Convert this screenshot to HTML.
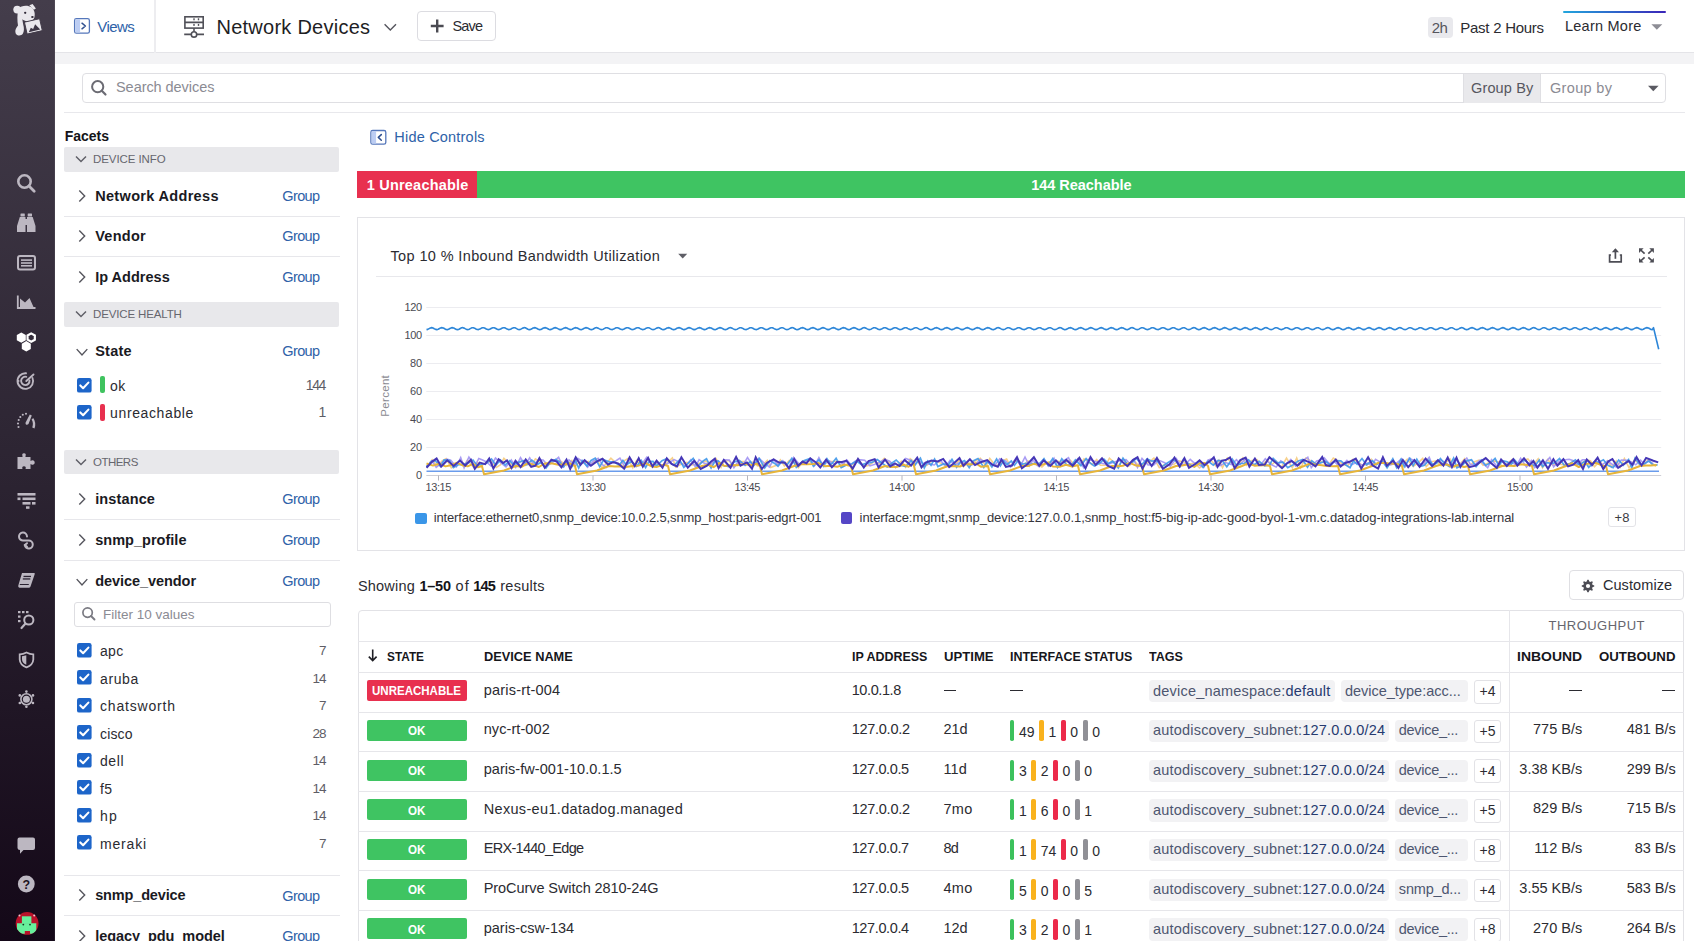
<!DOCTYPE html>
<html><head><meta charset="utf-8"><title>Network Devices</title><style>
html,body{margin:0;padding:0;width:1694px;height:941px;overflow:hidden;background:#fff;}
body{position:relative;font-family:"Liberation Sans",sans-serif;}
.t{position:absolute;white-space:nowrap;line-height:1;}
.r{position:absolute;box-sizing:border-box;}
svg{position:absolute;overflow:visible;}
</style></head><body>
<div class="r" style="left:0.00px;top:0.00px;width:55.00px;height:941.00px;background:linear-gradient(180deg,#443d4b 0%,#2c2432 50%,#140818 100%);"></div>
<div class="r" style="left:54.00px;top:0.00px;width:1.00px;height:941.00px;background:rgba(255,255,255,0.06);"></div>
<svg width="55" height="941" viewBox="0 0 55 941" style="left:0;top:0"><g fill="#e9e7ec"><circle cx="17.2" cy="9.6" r="3.9"/><path d="M29.3 5.2 L32.6 3.9 L35.9 8.6 L33.8 9.8 Z"/><path d="M18.5 8.5 C21 5.3 28 4.8 31.5 7.3 C34.6 9.8 35.3 14 34.4 17.4 C33.7 20.2 30.2 21.6 27.2 21.2 C25.2 21 23.5 20.3 22.3 19.3 L23.2 24.5 C24.2 27.8 24.3 31.2 22.8 33.8 C21.3 36.2 16.8 36.2 15.6 33.2 C14.6 30.4 16.3 27.8 18 25.6 C17.2 21 17 14 18.5 8.5 Z"/></g><circle cx="25.2" cy="12.8" r="1.15" fill="#2e2836"/><ellipse cx="32.4" cy="17" rx="1.3" ry="1.1" fill="#2e2836"/><g transform="rotate(-13 33.5 26.5)"><rect x="25.6" y="20.3" width="15.6" height="12.2" fill="#e9e7ec" stroke="#433c4a" stroke-width="1"/><path d="M27.6 31 L30.6 27.2 L32.6 28.8 L35.6 24.6 L39.4 31 Z" fill="#3d3645"/></g><circle cx="24.5" cy="181.5" r="6.2" fill="none" stroke="#bcb7c1" stroke-width="2.6"/><path d="M29 186 L34.2 191.2" stroke="#bcb7c1" stroke-width="2.8" stroke-linecap="round"/><g fill="#bcb7c1"><rect x="20.5" y="213.5" width="4.3" height="3" rx="0.5"/><rect x="27.7" y="213.5" width="4.3" height="3" rx="0.5"/><path d="M19.8 217 L25.5 217 L25.5 232 L17 232 L17 226 Z"/><path d="M27 217 L32.7 217 L35.5 226 L35.5 232 L27 232 Z"/><rect x="24.5" y="219" width="3.5" height="6"/></g><rect x="18" y="256" width="17" height="13.5" rx="2" fill="none" stroke="#bcb7c1" stroke-width="2"/><g fill="#bcb7c1"><rect x="21" y="259.3" width="11" height="1.6"/><rect x="21" y="262.2" width="11" height="1.6"/><rect x="21" y="265" width="11" height="1.6"/></g><path d="M17.8 295.5 L17.8 308 L35.5 308" fill="none" stroke="#bcb7c1" stroke-width="1.8"/><path d="M20 307 L20 298.5 L25 302.5 L29.5 298 L33.5 307 Z" fill="#bcb7c1"/><path d="M25.80,340.20 L21.30,342.80 L16.80,340.20 L16.80,335.00 L21.30,332.40 L25.80,335.00Z" fill="#ffffff"/><path d="M34.84,339.70 L31.20,341.80 L27.56,339.70 L27.56,335.50 L31.20,333.40 L34.84,335.50Z" fill="none" stroke="#ffffff" stroke-width="2.2"/><path d="M30.80,348.90 L26.30,351.50 L21.80,348.90 L21.80,343.70 L26.30,341.10 L30.80,343.70Z" fill="#ffffff"/><g fill="none" stroke="#bcb7c1" stroke-width="1.9" stroke-linecap="round"><path d="M32.5 378 A7.8 7.8 0 1 1 26 373.3"/><path d="M29.5 380.5 A4.2 4.2 0 1 1 26.3 376.8"/><path d="M26.3 381 L33.5 374.5"/></g><circle cx="18.5" cy="381" r="1" fill="#bcb7c1"/><g fill="#bcb7c1"><path d="M29.8 414.5 L31.8 415.5 L28.5 424 Q27 425.5 25.8 424.3 Q25 423 26 421.8 Z"/><path d="M33.2 418 Q36.5 422.5 34.5 428.5 L32.3 427.5 Q33.8 423 31.6 419.5 Z"/><circle cx="18.5" cy="427.0" r="1.05"/><circle cx="18.0" cy="423.5" r="1.05"/><circle cx="18.7" cy="420.0" r="1.05"/><circle cx="20.3" cy="417.0" r="1.05"/><circle cx="22.8" cy="414.8" r="1.05"/><circle cx="26.0" cy="413.8" r="1.05"/></g><path d="M17.5 457 L22.5 457 L22.5 456 Q21.5 453.5 24 453.2 Q26.5 453.5 25.5 456 L25.5 457 L30.5 457 L30.5 461 Q33 459.5 34.5 461.5 Q35.5 463.5 33.5 464.5 Q32 465.2 30.5 464 L30.5 469 L25.5 469 Q26.5 466.5 24 466.2 Q21.5 466.5 22.5 469 L17.5 469 Z" fill="#bcb7c1"/><g fill="#bcb7c1"><rect x="17.5" y="493" width="18" height="2.6"/><rect x="17.5" y="497.5" width="3" height="2.6"/><rect x="22.5" y="497.5" width="13" height="2.6"/><rect x="22.5" y="502" width="8" height="2.6"/><rect x="32" y="502" width="3.5" height="2.6"/><rect x="26" y="506.3" width="3.5" height="2.5"/></g><g fill="none" stroke="#bcb7c1" stroke-width="2" stroke-linecap="round"><path d="M27 536.5 A4 4 0 1 0 23.5 540.5 L28.5 540.5 A4 4 0 1 1 24.8 545"/><path d="M24.8 545 L27 543.2 M24.8 545 L27 546.8"/></g><path d="M22 573 L34.5 573 Q35 573.5 34.6 574.5 L30.5 586.5 Q30 587.8 28.8 587.8 L19.5 587.8 Q17.8 587.5 18.3 585.5 Z" fill="#bcb7c1"/><g fill="#2a2231"><rect x="23.5" y="575.8" width="7.5" height="1.3"/><rect x="22.8" y="578.3" width="7.5" height="1.3"/><rect x="19.8" y="584" width="9" height="1"/></g><g fill="#bcb7c1"><rect x="18" y="611" width="2.5" height="2.2"/><rect x="22" y="611" width="2.5" height="2.2"/><rect x="26" y="611" width="2.5" height="2.2"/><rect x="18" y="615.5" width="2.5" height="2.2"/><rect x="18" y="620" width="2.5" height="2.2"/></g><circle cx="28.8" cy="620" r="4.6" fill="none" stroke="#bcb7c1" stroke-width="2"/><path d="M25.5 623.5 L21.5 628" stroke="#bcb7c1" stroke-width="2.2" stroke-linecap="round"/><path d="M26.5 652.5 Q30 654.3 33.3 654.3 L33.3 659.5 Q33 665 26.5 667.3 Q20 665 19.7 659.5 L19.7 654.3 Q23 654.3 26.5 652.5 Z" fill="none" stroke="#bcb7c1" stroke-width="1.8"/><path d="M26.3 655.3 L26.3 664.8 Q22 663 22 659.3 L22 656.2 Q24.5 656 26.3 655.3Z" fill="#bcb7c1"/><circle cx="26.4" cy="699.2" r="5.5" fill="none" stroke="#bcb7c1" stroke-width="1.6"/><circle cx="26.4" cy="699.2" r="3.5" fill="#bcb7c1"/><circle cx="26.40" cy="691.60" r="1.3" fill="#bcb7c1"/><circle cx="32.98" cy="695.40" r="1.3" fill="#bcb7c1"/><circle cx="32.98" cy="703.00" r="1.3" fill="#bcb7c1"/><circle cx="26.40" cy="706.80" r="1.3" fill="#bcb7c1"/><circle cx="19.82" cy="703.00" r="1.3" fill="#bcb7c1"/><circle cx="19.82" cy="695.40" r="1.3" fill="#bcb7c1"/><path d="M19.5 837.5 L33 837.5 Q35 837.5 35 839.5 L35 848 Q35 850 33 850 L23.5 850 L20 853.8 L20 850 Q17.5 850 17.5 848 L17.5 839.5 Q17.5 837.5 19.5 837.5Z" fill="#bcb7c1"/><circle cx="26.3" cy="884" r="8.4" fill="#bcb7c1"/><text x="26.3" y="888.6" text-anchor="middle" font-family="Liberation Sans" font-weight="bold" font-size="12.5" fill="#1c1322">?</text><defs><clipPath id="avc"><circle cx="27.1" cy="923.4" r="11.4"/></clipPath></defs><circle cx="27.1" cy="923.4" r="11.4" fill="#b8122a"/><g clip-path="url(#avc)" fill="#66f09c"><rect x="21.9" y="916.3" width="9.5" height="7.5"/><path d="M17 923.3 L36.3 923.3 L36.3 933.8 L30 933.8 L30 931 L24.8 931 L24.8 933.8 L17 933.8 Z"/></g><circle cx="23.3" cy="924.6" r="0.9" fill="#0f3a1c"/><circle cx="30" cy="924.6" r="0.9" fill="#0f3a1c"/><circle cx="19.5" cy="915.6" r="1" fill="#f0c8d0"/><circle cx="34.2" cy="915.6" r="1" fill="#f0c8d0"/></svg>
<div class="r" style="left:55.00px;top:0.00px;width:1639.00px;height:53.00px;background:#ffffff;"></div>
<div class="r" style="left:55.00px;top:52.00px;width:1639.00px;height:1.00px;background:#e4e4e8;"></div>
<div class="r" style="left:55.00px;top:53.00px;width:1639.00px;height:11.00px;background:#f3f3f5;"></div>
<div class="r" style="left:154.00px;top:0.00px;width:2.00px;height:53.00px;background:#ededf0;"></div>
<svg width="30" height="30" style="left:68px;top:12px" viewBox="68 12 30 30"><rect x="74.6" y="18.6" width="14.8" height="14.6" rx="1.8" fill="#fff" stroke="#5577bb" stroke-width="1.3"/><rect x="75.3" y="19.3" width="4.8" height="13.2" fill="#bccdf3"/><path d="M82 23.2 L85.4 26 L82 28.8" fill="none" stroke="#2f4f8e" stroke-width="1.5" stroke-linecap="round" stroke-linejoin="round"/></svg>
<div class="t" style="left:97.20px;top:18.60px;font-size:15.00px;letter-spacing:-0.537px;color:#2e62a8;">Views</div>
<svg width="30" height="30" style="left:176px;top:10px" viewBox="176 10 30 30"><g fill="none" stroke="#505058" stroke-width="1.6"><rect x="184.9" y="16.8" width="18.3" height="11.3"/><path d="M184.9 22.4 L203.2 22.4 M194 28.1 L194 31.6 M184.2 34.4 L191.2 34.4 M196.9 34.4 L204 34.4"/><circle cx="194" cy="34.4" r="2.7"/></g><g fill="#505058"><rect x="193.3" y="18.3" width="1.4" height="2"/><rect x="197.8" y="18.3" width="1.4" height="2"/><rect x="193.3" y="23.9" width="1.4" height="2"/><rect x="197.8" y="23.9" width="1.4" height="2"/></g></svg>
<div class="t" style="left:216.50px;top:17.27px;font-size:20.00px;letter-spacing:0.250px;color:#1e1e24;">Network Devices</div>
<svg width="16" height="12" style="left:382px;top:21px" viewBox="382 21 16 12"><path d="M384.6 24.3 L390.3 30 L396 24.3" fill="none" stroke="#55555d" stroke-width="1.4"/></svg>
<div class="r" style="left:417.40px;top:11.30px;width:78.40px;height:29.90px;background:#fff;border:1px solid #dcdce1;border-radius:4px;"></div>
<svg width="16" height="16" style="left:429px;top:18px" viewBox="429 18 16 16"><path d="M437.2 19.6 L437.2 32.4 M430.8 26 L443.6 26" stroke="#4a4a52" stroke-width="2.4"/></svg>
<div class="t" style="left:452.40px;top:18.93px;font-size:14.50px;letter-spacing:-0.820px;color:#2b2b31;">Save</div>
<div class="r" style="left:1427.60px;top:16.80px;width:25.10px;height:21.40px;background:#e9e9ed;border-radius:4px;"></div>
<div class="t" style="left:1431.80px;top:20.00px;font-size:15.00px;letter-spacing:-0.750px;color:#55555d;">2h</div>
<div class="t" style="left:1460.30px;top:20.00px;font-size:15.00px;letter-spacing:-0.264px;color:#2b2b31;">Past 2 Hours</div>
<div class="r" style="left:1563.40px;top:11.00px;width:102.80px;height:2.40px;background:linear-gradient(90deg,#22a6dd,#3a25b8);border-radius:1px;"></div>
<div class="t" style="left:1565.00px;top:18.73px;font-size:14.50px;letter-spacing:0.237px;color:#2b2b31;">Learn More</div>
<svg width="14" height="10" style="left:1650px;top:22px" viewBox="1650 22 14 10"><path d="M1651.4 24.3 L1662.3 24.3 L1656.85 29.8 Z" fill="#8d8d95"/></svg>
<div class="r" style="left:82.40px;top:73.00px;width:1584.00px;height:30.40px;background:#fff;border:1px solid #dfdfe3;border-radius:4px;"></div>
<div class="r" style="left:1462.80px;top:73.50px;width:78.20px;height:29.40px;background:#e9e9ec;border-left:1px solid #dfdfe3;border-right:1px solid #dfdfe3;"></div>
<svg width="20" height="20" style="left:89px;top:78px" viewBox="89 78 20 20"><circle cx="97.7" cy="86.7" r="5.6" fill="none" stroke="#6b6b73" stroke-width="2"/><path d="M101.8 90.8 L105.5 94.5" stroke="#6b6b73" stroke-width="2.2" stroke-linecap="round"/></svg>
<div class="t" style="left:116.00px;top:80.23px;font-size:14.50px;letter-spacing:-0.054px;color:#8b8b93;">Search devices</div>
<div class="t" style="left:1471.00px;top:80.73px;font-size:14.50px;letter-spacing:0.148px;color:#57575f;">Group By</div>
<div class="t" style="left:1550.00px;top:80.73px;font-size:14.50px;letter-spacing:0.333px;color:#8b8b93;">Group by</div>
<svg width="14" height="10" style="left:1646px;top:83px" viewBox="1646 83 14 10"><path d="M1648 85.7 L1658.6 85.7 L1653.3 91.2 Z" fill="#5a5a62"/></svg>
<div class="r" style="left:64.00px;top:112.00px;width:1620.60px;height:1.00px;background:#e8e8ec;"></div>
<div class="t" style="left:64.70px;top:128.85px;font-size:14.00px;letter-spacing:-0.016px;font-weight:bold;color:#141418;">Facets</div>
<div class="r" style="left:64.30px;top:146.50px;width:274.90px;height:25.00px;background:#e8e8eb;border-radius:2px;"></div>
<svg width="16" height="12" style="left:72.8px;top:152.8px" viewBox="0 0 16 12"><path d="M3.00 3.40 L8 8.60 L13.00 3.40" fill="none" stroke="#5f5f67" stroke-width="1.40"/></svg>
<div class="t" style="left:93.00px;top:153.97px;font-size:11.50px;letter-spacing:-0.078px;color:#66666e;">DEVICE INFO</div>
<svg width="12" height="14" style="left:76.1px;top:188.5px" viewBox="0 0 12 14"><path d="M3.3 1.4 L8.7 7 L3.3 12.6" fill="none" stroke="#55555d" stroke-width="1.4"/></svg>
<div class="t" style="left:95.20px;top:188.53px;font-size:14.50px;letter-spacing:0.325px;font-weight:bold;color:#1a1a1f;">Network Address</div>
<div class="t" style="left:282.20px;top:188.83px;font-size:14.50px;letter-spacing:-0.578px;color:#2e62a8;">Group</div>
<div class="r" style="left:64.30px;top:215.80px;width:275.70px;height:1.00px;background:#e7e7eb;"></div>
<svg width="12" height="14" style="left:76.1px;top:228.7px" viewBox="0 0 12 14"><path d="M3.3 1.4 L8.7 7 L3.3 12.6" fill="none" stroke="#55555d" stroke-width="1.4"/></svg>
<div class="t" style="left:95.20px;top:228.73px;font-size:14.50px;letter-spacing:0.269px;font-weight:bold;color:#1a1a1f;">Vendor</div>
<div class="t" style="left:282.20px;top:229.03px;font-size:14.50px;letter-spacing:-0.578px;color:#2e62a8;">Group</div>
<div class="r" style="left:64.30px;top:256.10px;width:275.70px;height:1.00px;background:#e7e7eb;"></div>
<svg width="12" height="14" style="left:76.1px;top:269.8px" viewBox="0 0 12 14"><path d="M3.3 1.4 L8.7 7 L3.3 12.6" fill="none" stroke="#55555d" stroke-width="1.4"/></svg>
<div class="t" style="left:95.20px;top:269.83px;font-size:14.50px;letter-spacing:0.013px;font-weight:bold;color:#1a1a1f;">Ip Address</div>
<div class="t" style="left:282.20px;top:270.13px;font-size:14.50px;letter-spacing:-0.578px;color:#2e62a8;">Group</div>
<div class="r" style="left:64.30px;top:302.00px;width:274.90px;height:24.50px;background:#e8e8eb;border-radius:2px;"></div>
<svg width="16" height="12" style="left:72.8px;top:308.3px" viewBox="0 0 16 12"><path d="M3.00 3.40 L8 8.60 L13.00 3.40" fill="none" stroke="#5f5f67" stroke-width="1.40"/></svg>
<div class="t" style="left:93.00px;top:309.47px;font-size:11.50px;letter-spacing:-0.134px;color:#66666e;">DEVICE HEALTH</div>
<svg width="16" height="12" style="left:74.1px;top:345.8px" viewBox="0 0 16 12"><path d="M2.70 3.10 L8 8.90 L13.30 3.10" fill="none" stroke="#55555d" stroke-width="1.40"/></svg>
<div class="t" style="left:95.20px;top:344.03px;font-size:14.50px;letter-spacing:0.237px;font-weight:bold;color:#1a1a1f;">State</div>
<div class="t" style="left:282.20px;top:344.33px;font-size:14.50px;letter-spacing:-0.578px;color:#2e62a8;">Group</div>
<svg width="15" height="15" style="left:77.3px;top:377.6px" viewBox="0 0 15 15"><rect x="0" y="0" width="14.6" height="14.6" rx="2.2" fill="#1d65c9"/><path d="M3.3 7.4 L6.1 10.2 L11.4 4.6" fill="none" stroke="#fff" stroke-width="2.1" stroke-linecap="round" stroke-linejoin="round"/></svg>
<div class="r" style="left:99.90px;top:376.20px;width:4.90px;height:17.10px;background:#3fc35f;border-radius:2px;"></div>
<div class="t" style="left:110.10px;top:378.55px;font-size:14.00px;letter-spacing:0.360px;color:#2b2b31;">ok</div>
<div class="t" style="left:305.80px;top:378.15px;font-size:14.00px;letter-spacing:-1.390px;color:#5e5e66;">144</div>
<svg width="15" height="15" style="left:77.3px;top:404.9px" viewBox="0 0 15 15"><rect x="0" y="0" width="14.6" height="14.6" rx="2.2" fill="#1d65c9"/><path d="M3.3 7.4 L6.1 10.2 L11.4 4.6" fill="none" stroke="#fff" stroke-width="2.1" stroke-linecap="round" stroke-linejoin="round"/></svg>
<div class="r" style="left:99.90px;top:403.50px;width:4.90px;height:17.10px;background:#e8304f;border-radius:2px;"></div>
<div class="t" style="left:110.10px;top:405.65px;font-size:14.00px;letter-spacing:0.613px;color:#2b2b31;">unreachable</div>
<div class="t" style="left:318.43px;top:405.45px;font-size:14.00px;color:#5e5e66;">1</div>
<div class="r" style="left:64.30px;top:450.00px;width:274.90px;height:24.30px;background:#e8e8eb;border-radius:2px;"></div>
<svg width="16" height="12" style="left:72.8px;top:456.3px" viewBox="0 0 16 12"><path d="M3.00 3.40 L8 8.60 L13.00 3.40" fill="none" stroke="#5f5f67" stroke-width="1.40"/></svg>
<div class="t" style="left:93.00px;top:457.47px;font-size:11.50px;letter-spacing:-0.520px;color:#66666e;">OTHERS</div>
<svg width="12" height="14" style="left:76.1px;top:491.9px" viewBox="0 0 12 14"><path d="M3.3 1.4 L8.7 7 L3.3 12.6" fill="none" stroke="#55555d" stroke-width="1.4"/></svg>
<div class="t" style="left:95.20px;top:491.93px;font-size:14.50px;letter-spacing:0.129px;font-weight:bold;color:#1a1a1f;">instance</div>
<div class="t" style="left:282.20px;top:492.23px;font-size:14.50px;letter-spacing:-0.578px;color:#2e62a8;">Group</div>
<div class="r" style="left:64.30px;top:518.80px;width:275.70px;height:1.00px;background:#e7e7eb;"></div>
<svg width="12" height="14" style="left:76.1px;top:532.5px" viewBox="0 0 12 14"><path d="M3.3 1.4 L8.7 7 L3.3 12.6" fill="none" stroke="#55555d" stroke-width="1.4"/></svg>
<div class="t" style="left:95.20px;top:532.53px;font-size:14.50px;letter-spacing:0.022px;font-weight:bold;color:#1a1a1f;">snmp_profile</div>
<div class="t" style="left:282.20px;top:532.83px;font-size:14.50px;letter-spacing:-0.578px;color:#2e62a8;">Group</div>
<div class="r" style="left:64.30px;top:559.50px;width:275.70px;height:1.00px;background:#e7e7eb;"></div>
<svg width="16" height="12" style="left:74.1px;top:575.7px" viewBox="0 0 16 12"><path d="M2.70 3.10 L8 8.90 L13.30 3.10" fill="none" stroke="#55555d" stroke-width="1.40"/></svg>
<div class="t" style="left:95.20px;top:573.93px;font-size:14.50px;letter-spacing:-0.056px;font-weight:bold;color:#1a1a1f;">device_vendor</div>
<div class="t" style="left:282.20px;top:574.23px;font-size:14.50px;letter-spacing:-0.578px;color:#2e62a8;">Group</div>
<div class="r" style="left:73.90px;top:601.70px;width:256.70px;height:25.60px;background:#fff;border:1px solid #dedee2;border-radius:3px;"></div>
<svg width="16" height="16" style="left:81px;top:606px" viewBox="81 606 16 16"><circle cx="87.6" cy="612.6" r="4.7" fill="none" stroke="#7a7a82" stroke-width="1.7"/><path d="M91 616 L94.5 619.5" stroke="#7a7a82" stroke-width="1.9" stroke-linecap="round"/></svg>
<div class="t" style="left:103.00px;top:607.87px;font-size:13.50px;letter-spacing:-0.009px;color:#8b8b93;">Filter 10 values</div>
<svg width="15" height="15" style="left:77.2px;top:642.8px" viewBox="0 0 15 15"><rect x="0" y="0" width="14.6" height="14.6" rx="2.2" fill="#1d65c9"/><path d="M3.3 7.4 L6.1 10.2 L11.4 4.6" fill="none" stroke="#fff" stroke-width="2.1" stroke-linecap="round" stroke-linejoin="round"/></svg>
<div class="t" style="left:100.00px;top:644.15px;font-size:14.00px;letter-spacing:0.330px;color:#2b2b31;">apc</div>
<div class="t" style="left:318.91px;top:644.27px;font-size:13.50px;color:#5e5e66;">7</div>
<svg width="15" height="15" style="left:77.2px;top:670.3px" viewBox="0 0 15 15"><rect x="0" y="0" width="14.6" height="14.6" rx="2.2" fill="#1d65c9"/><path d="M3.3 7.4 L6.1 10.2 L11.4 4.6" fill="none" stroke="#fff" stroke-width="2.1" stroke-linecap="round" stroke-linejoin="round"/></svg>
<div class="t" style="left:100.00px;top:671.65px;font-size:14.00px;letter-spacing:0.590px;color:#2b2b31;">aruba</div>
<div class="t" style="left:312.40px;top:671.77px;font-size:13.50px;letter-spacing:-0.985px;color:#5e5e66;">14</div>
<svg width="15" height="15" style="left:77.2px;top:697.8px" viewBox="0 0 15 15"><rect x="0" y="0" width="14.6" height="14.6" rx="2.2" fill="#1d65c9"/><path d="M3.3 7.4 L6.1 10.2 L11.4 4.6" fill="none" stroke="#fff" stroke-width="2.1" stroke-linecap="round" stroke-linejoin="round"/></svg>
<div class="t" style="left:100.00px;top:699.15px;font-size:14.00px;letter-spacing:0.812px;color:#2b2b31;">chatsworth</div>
<div class="t" style="left:318.91px;top:699.27px;font-size:13.50px;color:#5e5e66;">7</div>
<svg width="15" height="15" style="left:77.2px;top:725.3px" viewBox="0 0 15 15"><rect x="0" y="0" width="14.6" height="14.6" rx="2.2" fill="#1d65c9"/><path d="M3.3 7.4 L6.1 10.2 L11.4 4.6" fill="none" stroke="#fff" stroke-width="2.1" stroke-linecap="round" stroke-linejoin="round"/></svg>
<div class="t" style="left:100.00px;top:726.65px;font-size:14.00px;letter-spacing:0.145px;color:#2b2b31;">cisco</div>
<div class="t" style="left:312.40px;top:726.77px;font-size:13.50px;letter-spacing:-0.985px;color:#5e5e66;">28</div>
<svg width="15" height="15" style="left:77.2px;top:752.8px" viewBox="0 0 15 15"><rect x="0" y="0" width="14.6" height="14.6" rx="2.2" fill="#1d65c9"/><path d="M3.3 7.4 L6.1 10.2 L11.4 4.6" fill="none" stroke="#fff" stroke-width="2.1" stroke-linecap="round" stroke-linejoin="round"/></svg>
<div class="t" style="left:100.00px;top:754.15px;font-size:14.00px;letter-spacing:0.577px;color:#2b2b31;">dell</div>
<div class="t" style="left:312.40px;top:754.27px;font-size:13.50px;letter-spacing:-0.985px;color:#5e5e66;">14</div>
<svg width="15" height="15" style="left:77.2px;top:780.3px" viewBox="0 0 15 15"><rect x="0" y="0" width="14.6" height="14.6" rx="2.2" fill="#1d65c9"/><path d="M3.3 7.4 L6.1 10.2 L11.4 4.6" fill="none" stroke="#fff" stroke-width="2.1" stroke-linecap="round" stroke-linejoin="round"/></svg>
<div class="t" style="left:100.00px;top:781.65px;font-size:14.00px;letter-spacing:0.310px;color:#2b2b31;">f5</div>
<div class="t" style="left:312.40px;top:781.77px;font-size:13.50px;letter-spacing:-0.985px;color:#5e5e66;">14</div>
<svg width="15" height="15" style="left:77.2px;top:807.8px" viewBox="0 0 15 15"><rect x="0" y="0" width="14.6" height="14.6" rx="2.2" fill="#1d65c9"/><path d="M3.3 7.4 L6.1 10.2 L11.4 4.6" fill="none" stroke="#fff" stroke-width="2.1" stroke-linecap="round" stroke-linejoin="round"/></svg>
<div class="t" style="left:100.00px;top:809.15px;font-size:14.00px;letter-spacing:1.260px;color:#2b2b31;">hp</div>
<div class="t" style="left:312.40px;top:809.27px;font-size:13.50px;letter-spacing:-0.985px;color:#5e5e66;">14</div>
<svg width="15" height="15" style="left:77.2px;top:835.3px" viewBox="0 0 15 15"><rect x="0" y="0" width="14.6" height="14.6" rx="2.2" fill="#1d65c9"/><path d="M3.3 7.4 L6.1 10.2 L11.4 4.6" fill="none" stroke="#fff" stroke-width="2.1" stroke-linecap="round" stroke-linejoin="round"/></svg>
<div class="t" style="left:100.00px;top:836.65px;font-size:14.00px;letter-spacing:0.820px;color:#2b2b31;">meraki</div>
<div class="t" style="left:318.91px;top:836.77px;font-size:13.50px;color:#5e5e66;">7</div>
<div class="r" style="left:64.30px;top:874.80px;width:275.70px;height:1.00px;background:#e7e7eb;"></div>
<svg width="12" height="14" style="left:76.1px;top:888.3px" viewBox="0 0 12 14"><path d="M3.3 1.4 L8.7 7 L3.3 12.6" fill="none" stroke="#55555d" stroke-width="1.4"/></svg>
<div class="t" style="left:95.20px;top:888.33px;font-size:14.50px;letter-spacing:-0.156px;font-weight:bold;color:#1a1a1f;">snmp_device</div>
<div class="t" style="left:282.20px;top:888.63px;font-size:14.50px;letter-spacing:-0.578px;color:#2e62a8;">Group</div>
<div class="r" style="left:64.30px;top:915.30px;width:275.70px;height:1.00px;background:#e7e7eb;"></div>
<svg width="12" height="14" style="left:76.1px;top:928.9px" viewBox="0 0 12 14"><path d="M3.3 1.4 L8.7 7 L3.3 12.6" fill="none" stroke="#55555d" stroke-width="1.4"/></svg>
<div class="t" style="left:95.20px;top:928.93px;font-size:14.50px;letter-spacing:-0.065px;font-weight:bold;color:#1a1a1f;">legacy_pdu_model</div>
<div class="t" style="left:282.20px;top:929.23px;font-size:14.50px;letter-spacing:-0.578px;color:#2e62a8;">Group</div>
<svg width="22" height="20" style="left:367px;top:127px" viewBox="367 127 22 20"><rect x="370.9" y="130.5" width="14.9" height="13.7" rx="1.8" fill="#fff" stroke="#5577bb" stroke-width="1.3"/><rect x="371.6" y="131.2" width="4.5" height="12.3" fill="#bccdf3"/><path d="M381.3 134.6 L378.3 137.4 L381.3 140.2" fill="none" stroke="#2f4f8e" stroke-width="1.5" stroke-linecap="round" stroke-linejoin="round"/></svg>
<div class="t" style="left:394.30px;top:130.13px;font-size:14.50px;letter-spacing:0.202px;color:#2e62a8;">Hide Controls</div>
<div class="r" style="left:357.40px;top:171.20px;width:119.80px;height:27.30px;background:#e8304f;"></div>
<div class="r" style="left:477.20px;top:171.20px;width:1207.60px;height:27.30px;background:#3fc462;"></div>
<div class="t" style="left:366.80px;top:178.03px;font-size:14.50px;letter-spacing:0.199px;font-weight:bold;color:#ffffff;">1 Unreachable</div>
<div class="t" style="left:1031.30px;top:178.03px;font-size:14.50px;letter-spacing:-0.040px;font-weight:bold;color:#ffffff;">144 Reachable</div>
<div class="r" style="left:357.40px;top:216.60px;width:1327.40px;height:334.60px;background:#fff;border:1px solid #e3e3e7;"></div>
<div class="t" style="left:390.50px;top:248.73px;font-size:14.50px;letter-spacing:0.371px;color:#2b2b31;">Top 10 % Inbound Bandwidth Utilization</div>
<svg width="14" height="10" style="left:676px;top:251px" viewBox="676 251 14 10"><path d="M678.2 253.8 L687.2 253.8 L682.7 258.6 Z" fill="#5f5f67"/></svg>
<div class="r" style="left:375.70px;top:276.00px;width:1290.90px;height:1.00px;background:#e8e8ec;"></div>
<svg width="50" height="22" style="left:1604px;top:244px" viewBox="1604 244 50 22" ><g fill="none" stroke="#4d4d55" stroke-width="1.7"><path d="M1611 255 L1609.6 255 L1609.6 261.8 L1621.2 261.8 L1621.2 255 L1619.8 255"/><path d="M1615.4 249.5 L1615.4 258.8"/></g><path d="M1611.8 252.3 L1615.4 248.2 L1619 252.3 Z" fill="#4d4d55"/><g stroke="#4d4d55" stroke-width="1.7" fill="none"><path d="M1640.2 249.5 L1644.6 253.6 M1652.7 249.5 L1648.3 253.6 M1640.2 261.3 L1644.6 257.4 M1652.7 261.3 L1648.3 257.4"/></g><g fill="#4d4d55"><path d="M1639 248.3 L1643.6 248.3 L1639 252.9 Z"/><path d="M1653.9 248.3 L1649.3 248.3 L1653.9 252.9 Z"/><path d="M1639 262.5 L1643.6 262.5 L1639 257.9 Z"/><path d="M1653.9 262.5 L1649.3 262.5 L1653.9 257.9 Z"/></g></svg>
<svg width="1694" height="941" style="left:0;top:0" viewBox="0 0 1694 941"><path d="M426.3 447.5 L1661.2 447.5" stroke="#ececf0" stroke-width="1"/><path d="M426.3 419.5 L1661.2 419.5" stroke="#ececf0" stroke-width="1"/><path d="M426.3 391.5 L1661.2 391.5" stroke="#ececf0" stroke-width="1"/><path d="M426.3 363.5 L1661.2 363.5" stroke="#ececf0" stroke-width="1"/><path d="M426.3 335.5 L1661.2 335.5" stroke="#ececf0" stroke-width="1"/><path d="M426.3 307.5 L1661.2 307.5" stroke="#ececf0" stroke-width="1"/><path d="M426.3 475.5 L1661.2 475.5" stroke="#cfcfd6" stroke-width="1"/><path d="M438.5 475.5 L438.5 480.5" stroke="#b5b5bd" stroke-width="1"/><path d="M593.0 475.5 L593.0 480.5" stroke="#b5b5bd" stroke-width="1"/><path d="M747.5 475.5 L747.5 480.5" stroke="#b5b5bd" stroke-width="1"/><path d="M902.0 475.5 L902.0 480.5" stroke="#b5b5bd" stroke-width="1"/><path d="M1056.5 475.5 L1056.5 480.5" stroke="#b5b5bd" stroke-width="1"/><path d="M1211.0 475.5 L1211.0 480.5" stroke="#b5b5bd" stroke-width="1"/><path d="M1365.5 475.5 L1365.5 480.5" stroke="#b5b5bd" stroke-width="1"/><path d="M1520.0 475.5 L1520.0 480.5" stroke="#b5b5bd" stroke-width="1"/><polyline points="426.5,329.65 427.8,329.35 429.1,328.63 430.4,327.93 431.7,327.65 433.0,327.97 434.3,328.70 435.6,329.39 436.9,329.65 438.2,329.31 439.5,328.57 440.8,327.89 442.1,327.65 443.4,328.02 444.7,328.76 446.0,329.43 447.3,329.64 448.6,329.26 449.9,328.51 451.2,327.85 452.5,327.66 453.8,328.06 455.1,328.82 456.4,329.47 457.7,329.63 459.0,329.21 460.3,328.45 461.6,327.81 462.9,327.67 464.2,328.12 465.5,328.88 466.8,329.50 468.1,329.62 469.4,329.16 470.7,328.39 472.0,327.78 473.3,327.69 474.6,328.17 475.9,328.94 477.2,329.53 478.5,329.60 479.8,329.11 481.1,328.34 482.4,327.75 483.7,327.71 485.0,328.22 486.3,328.99 487.6,329.56 488.9,329.58 490.2,329.05 491.5,328.28 492.8,327.73 494.1,327.73 495.4,328.28 496.7,329.05 498.0,329.58 499.3,329.56 500.6,328.99 501.9,328.22 503.2,327.71 504.5,327.75 505.8,328.34 507.1,329.11 508.4,329.60 509.7,329.53 511.0,328.94 512.3,328.17 513.6,327.69 514.9,327.78 516.2,328.39 517.5,329.16 518.8,329.62 520.1,329.50 521.4,328.88 522.7,328.12 524.0,327.67 525.3,327.81 526.6,328.45 527.9,329.21 529.2,329.63 530.5,329.47 531.8,328.82 533.1,328.06 534.4,327.66 535.7,327.85 537.0,328.51 538.3,329.26 539.6,329.64 540.9,329.43 542.2,328.76 543.5,328.02 544.8,327.65 546.1,327.89 547.4,328.57 548.7,329.31 550.0,329.65 551.3,329.39 552.6,328.70 553.9,327.97 555.2,327.65 556.5,327.93 557.8,328.63 559.1,329.35 560.4,329.65 561.7,329.35 563.0,328.63 564.3,327.93 565.6,327.65 566.9,327.97 568.2,328.70 569.5,329.39 570.8,329.65 572.1,329.31 573.4,328.57 574.7,327.89 576.0,327.65 577.3,328.02 578.6,328.76 579.9,329.43 581.2,329.64 582.5,329.26 583.8,328.51 585.1,327.85 586.4,327.66 587.7,328.06 589.0,328.82 590.3,329.47 591.6,329.63 592.9,329.21 594.2,328.45 595.5,327.81 596.8,327.67 598.1,328.12 599.4,328.88 600.7,329.50 602.0,329.62 603.3,329.16 604.6,328.39 605.9,327.78 607.2,327.69 608.5,328.17 609.8,328.94 611.1,329.53 612.4,329.60 613.7,329.11 615.0,328.34 616.3,327.75 617.6,327.71 618.9,328.22 620.2,328.99 621.5,329.56 622.8,329.58 624.1,329.05 625.4,328.28 626.7,327.73 628.0,327.73 629.3,328.28 630.6,329.05 631.9,329.58 633.2,329.56 634.5,328.99 635.8,328.22 637.1,327.71 638.4,327.75 639.7,328.34 641.0,329.11 642.3,329.60 643.6,329.53 644.9,328.94 646.2,328.17 647.5,327.69 648.8,327.78 650.1,328.39 651.4,329.16 652.7,329.62 654.0,329.50 655.3,328.88 656.6,328.12 657.9,327.67 659.2,327.81 660.5,328.45 661.8,329.21 663.1,329.63 664.4,329.47 665.7,328.82 667.0,328.06 668.3,327.66 669.6,327.85 670.9,328.51 672.2,329.26 673.5,329.64 674.8,329.43 676.1,328.76 677.4,328.02 678.7,327.65 680.0,327.89 681.3,328.57 682.6,329.31 683.9,329.65 685.2,329.39 686.5,328.70 687.8,327.97 689.1,327.65 690.4,327.93 691.7,328.63 693.0,329.35 694.3,329.65 695.6,329.35 696.9,328.63 698.2,327.93 699.5,327.65 700.8,327.97 702.1,328.70 703.4,329.39 704.7,329.65 706.0,329.31 707.3,328.57 708.6,327.89 709.9,327.65 711.2,328.02 712.5,328.76 713.8,329.43 715.1,329.64 716.4,329.26 717.7,328.51 719.0,327.85 720.3,327.66 721.6,328.06 722.9,328.82 724.2,329.47 725.5,329.63 726.8,329.21 728.1,328.45 729.4,327.81 730.7,327.67 732.0,328.12 733.3,328.88 734.6,329.50 735.9,329.62 737.2,329.16 738.5,328.39 739.8,327.78 741.1,327.69 742.4,328.17 743.7,328.94 745.0,329.53 746.3,329.60 747.6,329.11 748.9,328.34 750.2,327.75 751.5,327.71 752.8,328.22 754.1,328.99 755.4,329.56 756.7,329.58 758.0,329.05 759.3,328.28 760.6,327.73 761.9,327.73 763.2,328.28 764.5,329.05 765.8,329.58 767.1,329.56 768.4,328.99 769.7,328.22 771.0,327.71 772.3,327.75 773.6,328.34 774.9,329.11 776.2,329.60 777.5,329.53 778.8,328.94 780.1,328.17 781.4,327.69 782.7,327.78 784.0,328.39 785.3,329.16 786.6,329.62 787.9,329.50 789.2,328.88 790.5,328.12 791.8,327.67 793.1,327.81 794.4,328.45 795.7,329.21 797.0,329.63 798.3,329.47 799.6,328.82 800.9,328.06 802.2,327.66 803.5,327.85 804.8,328.51 806.1,329.26 807.4,329.64 808.7,329.43 810.0,328.76 811.3,328.02 812.6,327.65 813.9,327.89 815.2,328.57 816.5,329.31 817.8,329.65 819.1,329.39 820.4,328.70 821.7,327.97 823.0,327.65 824.3,327.93 825.6,328.63 826.9,329.35 828.2,329.65 829.5,329.35 830.8,328.63 832.1,327.93 833.4,327.65 834.7,327.97 836.0,328.70 837.3,329.39 838.6,329.65 839.9,329.31 841.2,328.57 842.5,327.89 843.8,327.65 845.1,328.02 846.4,328.76 847.7,329.43 849.0,329.64 850.3,329.26 851.6,328.51 852.9,327.85 854.2,327.66 855.5,328.06 856.8,328.82 858.1,329.47 859.4,329.63 860.7,329.21 862.0,328.45 863.3,327.81 864.6,327.67 865.9,328.12 867.2,328.88 868.5,329.50 869.8,329.62 871.1,329.16 872.4,328.39 873.7,327.78 875.0,327.69 876.3,328.17 877.6,328.94 878.9,329.53 880.2,329.60 881.5,329.11 882.8,328.34 884.1,327.75 885.4,327.71 886.7,328.22 888.0,328.99 889.3,329.56 890.6,329.58 891.9,329.05 893.2,328.28 894.5,327.73 895.8,327.73 897.1,328.28 898.4,329.05 899.7,329.58 901.0,329.56 902.3,328.99 903.6,328.22 904.9,327.71 906.2,327.75 907.5,328.34 908.8,329.11 910.1,329.60 911.4,329.53 912.7,328.94 914.0,328.17 915.3,327.69 916.6,327.78 917.9,328.39 919.2,329.16 920.5,329.62 921.8,329.50 923.1,328.88 924.4,328.12 925.7,327.67 927.0,327.81 928.3,328.45 929.6,329.21 930.9,329.63 932.2,329.47 933.5,328.82 934.8,328.06 936.1,327.66 937.4,327.85 938.7,328.51 940.0,329.26 941.3,329.64 942.6,329.43 943.9,328.76 945.2,328.02 946.5,327.65 947.8,327.89 949.1,328.57 950.4,329.31 951.7,329.65 953.0,329.39 954.3,328.70 955.6,327.97 956.9,327.65 958.2,327.93 959.5,328.63 960.8,329.35 962.1,329.65 963.4,329.35 964.7,328.63 966.0,327.93 967.3,327.65 968.6,327.97 969.9,328.70 971.2,329.39 972.5,329.65 973.8,329.31 975.1,328.57 976.4,327.89 977.7,327.65 979.0,328.02 980.3,328.76 981.6,329.43 982.9,329.64 984.2,329.26 985.5,328.51 986.8,327.85 988.1,327.66 989.4,328.06 990.7,328.82 992.0,329.47 993.3,329.63 994.6,329.21 995.9,328.45 997.2,327.81 998.5,327.67 999.8,328.12 1001.1,328.88 1002.4,329.50 1003.7,329.62 1005.0,329.16 1006.3,328.39 1007.6,327.78 1008.9,327.69 1010.2,328.17 1011.5,328.94 1012.8,329.53 1014.1,329.60 1015.4,329.11 1016.7,328.34 1018.0,327.75 1019.3,327.71 1020.6,328.22 1021.9,328.99 1023.2,329.56 1024.5,329.58 1025.8,329.05 1027.1,328.28 1028.4,327.73 1029.7,327.73 1031.0,328.28 1032.3,329.05 1033.6,329.58 1034.9,329.56 1036.2,328.99 1037.5,328.22 1038.8,327.71 1040.1,327.75 1041.4,328.34 1042.7,329.11 1044.0,329.60 1045.3,329.53 1046.6,328.94 1047.9,328.17 1049.2,327.69 1050.5,327.78 1051.8,328.39 1053.1,329.16 1054.4,329.62 1055.7,329.50 1057.0,328.88 1058.3,328.12 1059.6,327.67 1060.9,327.81 1062.2,328.45 1063.5,329.21 1064.8,329.63 1066.1,329.47 1067.4,328.82 1068.7,328.06 1070.0,327.66 1071.3,327.85 1072.6,328.51 1073.9,329.26 1075.2,329.64 1076.5,329.43 1077.8,328.76 1079.1,328.02 1080.4,327.65 1081.7,327.89 1083.0,328.57 1084.3,329.31 1085.6,329.65 1086.9,329.39 1088.2,328.70 1089.5,327.97 1090.8,327.65 1092.1,327.93 1093.4,328.63 1094.7,329.35 1096.0,329.65 1097.3,329.35 1098.6,328.63 1099.9,327.93 1101.2,327.65 1102.5,327.97 1103.8,328.70 1105.1,329.39 1106.4,329.65 1107.7,329.31 1109.0,328.57 1110.3,327.89 1111.6,327.65 1112.9,328.02 1114.2,328.76 1115.5,329.43 1116.8,329.64 1118.1,329.26 1119.4,328.51 1120.7,327.85 1122.0,327.66 1123.3,328.06 1124.6,328.82 1125.9,329.47 1127.2,329.63 1128.5,329.21 1129.8,328.45 1131.1,327.81 1132.4,327.67 1133.7,328.12 1135.0,328.88 1136.3,329.50 1137.6,329.62 1138.9,329.16 1140.2,328.39 1141.5,327.78 1142.8,327.69 1144.1,328.17 1145.4,328.94 1146.7,329.53 1148.0,329.60 1149.3,329.11 1150.6,328.34 1151.9,327.75 1153.2,327.71 1154.5,328.22 1155.8,328.99 1157.1,329.56 1158.4,329.58 1159.7,329.05 1161.0,328.28 1162.3,327.73 1163.6,327.73 1164.9,328.28 1166.2,329.05 1167.5,329.58 1168.8,329.56 1170.1,328.99 1171.4,328.22 1172.7,327.71 1174.0,327.75 1175.3,328.34 1176.6,329.11 1177.9,329.60 1179.2,329.53 1180.5,328.94 1181.8,328.17 1183.1,327.69 1184.4,327.78 1185.7,328.39 1187.0,329.16 1188.3,329.62 1189.6,329.50 1190.9,328.88 1192.2,328.12 1193.5,327.67 1194.8,327.81 1196.1,328.45 1197.4,329.21 1198.7,329.63 1200.0,329.47 1201.3,328.82 1202.6,328.06 1203.9,327.66 1205.2,327.85 1206.5,328.51 1207.8,329.26 1209.1,329.64 1210.4,329.43 1211.7,328.76 1213.0,328.02 1214.3,327.65 1215.6,327.89 1216.9,328.57 1218.2,329.31 1219.5,329.65 1220.8,329.39 1222.1,328.70 1223.4,327.97 1224.7,327.65 1226.0,327.93 1227.3,328.63 1228.6,329.35 1229.9,329.65 1231.2,329.35 1232.5,328.63 1233.8,327.93 1235.1,327.65 1236.4,327.97 1237.7,328.70 1239.0,329.39 1240.3,329.65 1241.6,329.31 1242.9,328.57 1244.2,327.89 1245.5,327.65 1246.8,328.02 1248.1,328.76 1249.4,329.43 1250.7,329.64 1252.0,329.26 1253.3,328.51 1254.6,327.85 1255.9,327.66 1257.2,328.06 1258.5,328.82 1259.8,329.47 1261.1,329.63 1262.4,329.21 1263.7,328.45 1265.0,327.81 1266.3,327.67 1267.6,328.12 1268.9,328.88 1270.2,329.50 1271.5,329.62 1272.8,329.16 1274.1,328.39 1275.4,327.78 1276.7,327.69 1278.0,328.17 1279.3,328.94 1280.6,329.53 1281.9,329.60 1283.2,329.11 1284.5,328.34 1285.8,327.75 1287.1,327.71 1288.4,328.22 1289.7,328.99 1291.0,329.56 1292.3,329.58 1293.6,329.05 1294.9,328.28 1296.2,327.73 1297.5,327.73 1298.8,328.28 1300.1,329.05 1301.4,329.58 1302.7,329.56 1304.0,328.99 1305.3,328.22 1306.6,327.71 1307.9,327.75 1309.2,328.34 1310.5,329.11 1311.8,329.60 1313.1,329.53 1314.4,328.94 1315.7,328.17 1317.0,327.69 1318.3,327.78 1319.6,328.39 1320.9,329.16 1322.2,329.62 1323.5,329.50 1324.8,328.88 1326.1,328.12 1327.4,327.67 1328.7,327.81 1330.0,328.45 1331.3,329.21 1332.6,329.63 1333.9,329.47 1335.2,328.82 1336.5,328.06 1337.8,327.66 1339.1,327.85 1340.4,328.51 1341.7,329.26 1343.0,329.64 1344.3,329.43 1345.6,328.76 1346.9,328.02 1348.2,327.65 1349.5,327.89 1350.8,328.57 1352.1,329.31 1353.4,329.65 1354.7,329.39 1356.0,328.70 1357.3,327.97 1358.6,327.65 1359.9,327.93 1361.2,328.63 1362.5,329.35 1363.8,329.65 1365.1,329.35 1366.4,328.63 1367.7,327.93 1369.0,327.65 1370.3,327.97 1371.6,328.70 1372.9,329.39 1374.2,329.65 1375.5,329.31 1376.8,328.57 1378.1,327.89 1379.4,327.65 1380.7,328.02 1382.0,328.76 1383.3,329.43 1384.6,329.64 1385.9,329.26 1387.2,328.51 1388.5,327.85 1389.8,327.66 1391.1,328.06 1392.4,328.82 1393.7,329.47 1395.0,329.63 1396.3,329.21 1397.6,328.45 1398.9,327.81 1400.2,327.67 1401.5,328.12 1402.8,328.88 1404.1,329.50 1405.4,329.62 1406.7,329.16 1408.0,328.39 1409.3,327.78 1410.6,327.69 1411.9,328.17 1413.2,328.94 1414.5,329.53 1415.8,329.60 1417.1,329.11 1418.4,328.34 1419.7,327.75 1421.0,327.71 1422.3,328.22 1423.6,328.99 1424.9,329.56 1426.2,329.58 1427.5,329.05 1428.8,328.28 1430.1,327.73 1431.4,327.73 1432.7,328.28 1434.0,329.05 1435.3,329.58 1436.6,329.56 1437.9,328.99 1439.2,328.22 1440.5,327.71 1441.8,327.75 1443.1,328.34 1444.4,329.11 1445.7,329.60 1447.0,329.53 1448.3,328.94 1449.6,328.17 1450.9,327.69 1452.2,327.78 1453.5,328.39 1454.8,329.16 1456.1,329.62 1457.4,329.50 1458.7,328.88 1460.0,328.12 1461.3,327.67 1462.6,327.81 1463.9,328.45 1465.2,329.21 1466.5,329.63 1467.8,329.47 1469.1,328.82 1470.4,328.06 1471.7,327.66 1473.0,327.85 1474.3,328.51 1475.6,329.26 1476.9,329.64 1478.2,329.43 1479.5,328.76 1480.8,328.02 1482.1,327.65 1483.4,327.89 1484.7,328.57 1486.0,329.31 1487.3,329.65 1488.6,329.39 1489.9,328.70 1491.2,327.97 1492.5,327.65 1493.8,327.93 1495.1,328.63 1496.4,329.35 1497.7,329.65 1499.0,329.35 1500.3,328.63 1501.6,327.93 1502.9,327.65 1504.2,327.97 1505.5,328.70 1506.8,329.39 1508.1,329.65 1509.4,329.31 1510.7,328.57 1512.0,327.89 1513.3,327.65 1514.6,328.02 1515.9,328.76 1517.2,329.43 1518.5,329.64 1519.8,329.26 1521.1,328.51 1522.4,327.85 1523.7,327.66 1525.0,328.06 1526.3,328.82 1527.6,329.47 1528.9,329.63 1530.2,329.21 1531.5,328.45 1532.8,327.81 1534.1,327.67 1535.4,328.12 1536.7,328.88 1538.0,329.50 1539.3,329.62 1540.6,329.16 1541.9,328.39 1543.2,327.78 1544.5,327.69 1545.8,328.17 1547.1,328.94 1548.4,329.53 1549.7,329.60 1551.0,329.11 1552.3,328.34 1553.6,327.75 1554.9,327.71 1556.2,328.22 1557.5,328.99 1558.8,329.56 1560.1,329.58 1561.4,329.05 1562.7,328.28 1564.0,327.73 1565.3,327.73 1566.6,328.28 1567.9,329.05 1569.2,329.58 1570.5,329.56 1571.8,328.99 1573.1,328.22 1574.4,327.71 1575.7,327.75 1577.0,328.34 1578.3,329.11 1579.6,329.60 1580.9,329.53 1582.2,328.94 1583.5,328.17 1584.8,327.69 1586.1,327.78 1587.4,328.39 1588.7,329.16 1590.0,329.62 1591.3,329.50 1592.6,328.88 1593.9,328.12 1595.2,327.67 1596.5,327.81 1597.8,328.45 1599.1,329.21 1600.4,329.63 1601.7,329.47 1603.0,328.82 1604.3,328.06 1605.6,327.66 1606.9,327.85 1608.2,328.51 1609.5,329.26 1610.8,329.64 1612.1,329.43 1613.4,328.76 1614.7,328.02 1616.0,327.65 1617.3,327.89 1618.6,328.57 1619.9,329.31 1621.2,329.65 1622.5,329.39 1623.8,328.70 1625.1,327.97 1626.4,327.65 1627.7,327.93 1629.0,328.63 1630.3,329.35 1631.6,329.65 1632.9,329.35 1634.2,328.63 1635.5,327.93 1636.8,327.65 1638.1,327.97 1639.4,328.70 1640.7,329.39 1642.0,329.65 1643.3,329.31 1644.6,328.57 1645.9,327.89 1647.2,327.65 1648.5,328.02 1649.8,328.76 1651.1,329.43 1652.4,329.64 1653.5,327.6 1658.7,349.3" fill="none" stroke="#2d86d8" stroke-width="1.6" stroke-linejoin="round"/><path d="M426.5 471.2 L1659 471.2" stroke="#6a9cec" stroke-width="1.6"/><polyline points="426.5,466.5 432.3,459.7 437.1,466.3 442.1,461.0 446.1,458.7 451.3,467.9 457.1,463.6 460.8,459.7 464.2,465.3 467.5,460.0 473.0,466.7 477.6,462.8 481.6,465.5 487.2,462.1 491.0,461.3 496.3,467.5 500.6,464.7 503.9,458.3 508.4,462.5 511.8,464.4 515.8,465.7 521.6,461.1 525.5,461.3 531.0,466.5 535.4,458.9 539.0,461.1 543.4,465.4 549.3,462.0 554.9,460.1 560.5,461.0 566.5,465.4 571.8,460.5 575.2,466.5 579.1,462.4 583.6,462.9 588.4,461.4 592.1,464.6 596.0,458.9 601.8,467.8 607.4,462.6 610.9,458.1 614.8,461.8 620.3,465.5 624.0,460.8 627.9,458.5 632.8,467.7 636.6,460.6 641.0,465.1 645.3,461.0 649.5,465.4 654.5,463.4 658.1,464.6 663.8,465.3 667.1,462.9 672.4,458.0 675.8,467.1 681.5,464.0 686.9,462.3 692.0,464.9 696.4,464.8 701.2,462.4 706.0,460.9 711.0,464.9 716.2,458.9 721.1,467.4 724.5,460.6 729.4,460.7 734.5,466.7 740.3,461.5 744.3,461.5 748.0,463.8 752.5,462.1 757.5,466.0 763.0,464.9 767.3,460.4 770.8,467.4 776.4,465.3 780.4,459.9 784.4,465.9 789.3,460.4 794.9,462.8 798.3,467.6 801.6,463.4 805.7,460.6 809.3,461.4 814.8,465.0 818.1,462.7 823.1,464.5 829.0,461.5 833.5,461.5 838.0,461.4 842.0,466.9 846.7,464.3 851.0,465.0 854.4,464.1 858.0,459.3 863.7,466.5 869.4,465.2 873.9,461.5 879.1,463.7 884.3,458.4 890.2,463.2 895.6,467.7 901.2,461.2 905.6,467.2 910.2,458.7 913.6,461.4 917.7,461.2 921.4,467.0 926.9,465.2 931.5,460.9 935.3,460.5 940.6,463.1 946.1,465.6 950.4,465.0 954.2,465.3 958.8,460.8 963.5,466.6 966.8,463.1 971.2,463.3 975.7,460.8 980.4,458.2 986.2,466.2 989.8,458.6 995.5,465.6 999.2,465.1 1002.8,460.6 1006.6,459.1 1010.7,466.7 1014.2,461.1 1018.8,460.8 1023.5,465.8 1027.9,460.9 1031.6,463.7 1036.3,463.6 1041.9,467.1 1047.4,462.1 1051.5,461.6 1057.4,461.2 1061.3,461.8 1064.8,462.6 1070.2,460.1 1075.3,465.2 1080.4,465.3 1084.0,458.8 1088.6,461.4 1092.0,464.6 1096.7,459.5 1100.3,465.2 1105.9,465.1 1109.4,458.2 1113.9,462.1 1118.4,466.0 1123.2,459.0 1128.8,466.1 1134.1,460.8 1137.7,464.6 1143.4,464.0 1149.0,462.5 1153.9,458.1 1159.3,467.7 1164.6,464.6 1168.9,464.9 1174.1,464.3 1178.4,460.9 1182.6,461.5 1186.8,463.6 1190.6,463.8 1194.8,463.3 1199.5,468.0 1204.5,464.3 1210.4,459.3 1215.7,465.9 1219.0,460.2 1222.5,467.7 1227.3,458.1 1232.0,463.7 1237.5,466.6 1242.8,458.2 1246.5,465.1 1251.1,460.8 1256.9,459.7 1261.8,465.5 1266.8,460.5 1272.0,464.5 1275.9,461.0 1281.2,467.6 1286.5,458.0 1292.3,467.7 1296.7,458.1 1300.6,467.8 1305.8,458.1 1311.3,461.1 1316.2,465.2 1319.6,461.1 1324.0,462.8 1328.0,466.0 1333.3,458.0 1339.2,461.7 1342.7,464.4 1347.7,465.5 1352.8,459.4 1357.8,461.4 1361.7,465.1 1367.3,464.7 1371.3,459.3 1374.8,464.8 1378.2,463.3 1383.2,459.8 1387.0,467.1 1392.5,461.1 1398.0,464.3 1401.8,465.4 1407.2,459.2 1413.2,466.4 1418.5,462.6 1422.7,458.4 1426.2,466.5 1430.7,462.0 1436.1,460.8 1441.1,465.6 1446.3,461.9 1450.0,459.0 1454.2,467.0 1459.0,465.2 1464.7,458.7 1468.8,465.9 1474.6,461.7 1478.8,460.2 1483.1,465.2 1487.9,463.2 1493.4,460.9 1498.7,461.9 1502.0,466.4 1506.8,463.8 1512.2,459.6 1517.6,464.8 1522.9,460.9 1527.9,458.9 1532.9,465.3 1538.2,458.8 1542.5,467.9 1547.6,459.6 1552.8,465.1 1557.1,463.8 1562.7,464.7 1568.4,463.7 1573.1,464.5 1577.4,465.0 1582.7,462.4 1586.4,460.0 1590.4,460.8 1594.5,466.8 1599.9,461.3 1604.3,467.7 1607.7,460.9 1611.5,467.0 1616.3,460.9 1620.3,467.2 1624.4,458.6 1629.0,467.6 1634.7,459.6 1640.6,465.3 1643.9,464.5 1648.2,459.7 1652.2,463.8 1656.1,466.2" fill="none" stroke="#f6c977" stroke-width="1.6" stroke-linejoin="miter" opacity="0.85"/><polyline points="426.5,466.7 431.8,460.8 436.2,467.3 441.6,462.8 446.8,459.2 450.7,460.1 456.4,466.8 460.7,457.6 464.1,467.7 468.9,457.0 475.0,465.8 478.8,458.5 482.6,460.0 486.5,462.0 491.0,466.0 495.5,458.1 501.6,463.4 506.0,466.8 511.3,459.9 515.7,467.3 520.5,457.7 525.1,465.0 529.7,457.9 533.4,464.8 538.7,459.8 543.1,460.0 547.8,465.2 552.5,462.4 558.6,457.3 563.0,467.0 569.0,459.8 574.6,465.1 578.0,458.5 584.2,462.5 587.6,467.2 593.4,461.0 598.2,458.4 602.4,464.7 606.2,467.5 610.3,462.6 615.7,460.9 619.9,458.2 625.3,467.6 629.8,459.2 636.0,466.6 642.0,463.9 646.6,457.4 652.2,465.5 656.6,462.8 660.0,464.7 665.7,464.8 670.6,461.8 674.2,459.6 680.3,462.7 685.4,466.2 690.8,459.9 695.4,466.8 699.1,459.6 704.5,463.4 710.5,464.3 715.3,460.2 720.6,465.1 724.9,459.8 729.3,460.1 733.9,467.7 738.7,460.6 743.4,464.4 747.5,457.6 753.2,466.2 758.8,458.3 764.0,462.8 769.4,467.0 773.7,459.5 777.9,465.0 782.8,460.7 788.5,467.8 793.6,457.5 799.5,464.6 804.7,463.1 810.4,458.5 814.5,465.6 818.9,457.7 822.8,465.1 828.9,460.6 834.7,464.3 839.1,461.4 842.9,464.3 846.8,459.9 851.1,464.8 854.9,461.4 858.8,459.6 864.7,460.3 870.0,465.9 874.9,464.2 879.7,462.3 884.9,459.3 889.7,461.3 895.7,467.4 901.1,463.5 905.7,458.5 911.2,460.5 914.8,464.5 918.3,459.9 922.0,463.1 928.1,463.9 934.2,465.0 940.2,460.1 945.8,466.2 950.0,460.5 955.1,465.2 960.7,461.7 964.9,463.1 970.2,465.0 975.0,464.3 980.5,459.4 986.3,462.4 990.3,462.7 994.7,465.6 999.8,458.8 1005.9,461.1 1010.5,467.0 1015.6,458.7 1020.7,465.6 1025.0,457.0 1029.3,465.9 1033.1,460.1 1037.4,465.5 1043.5,459.6 1048.7,466.1 1054.0,458.3 1057.6,467.3 1063.8,460.7 1068.5,457.6 1072.5,466.6 1077.7,459.0 1083.8,467.8 1088.3,459.5 1093.7,461.1 1098.6,462.5 1103.9,463.7 1108.2,464.2 1114.2,461.9 1120.3,460.6 1126.1,459.6 1130.2,464.3 1133.7,459.7 1137.5,467.4 1142.0,458.5 1148.0,465.0 1153.8,464.9 1158.7,460.1 1164.7,462.8 1170.3,466.2 1176.3,458.5 1180.2,464.4 1185.4,464.2 1190.2,459.3 1193.8,462.6 1198.8,464.7 1203.7,467.4 1208.1,459.9 1213.8,458.5 1220.0,465.7 1225.7,462.6 1231.3,464.5 1236.5,459.7 1240.1,464.3 1246.3,458.5 1250.0,462.7 1253.9,464.5 1260.1,465.7 1265.3,458.7 1270.7,464.3 1276.2,467.1 1280.8,460.8 1286.0,464.5 1290.8,459.6 1295.7,466.2 1302.0,461.4 1307.8,457.2 1311.3,467.7 1316.6,460.9 1320.3,460.1 1324.2,457.7 1329.5,464.0 1334.1,461.5 1337.6,464.6 1342.9,464.9 1346.9,460.5 1351.6,464.9 1356.5,462.3 1362.1,465.2 1367.9,463.0 1371.7,465.9 1375.5,459.3 1379.4,461.6 1385.6,462.6 1390.2,464.9 1396.3,463.3 1401.6,458.8 1405.4,466.4 1409.2,458.0 1414.0,460.6 1417.6,463.1 1423.0,464.7 1429.2,457.3 1432.9,466.3 1437.0,461.2 1440.6,459.8 1446.7,463.4 1451.3,467.4 1455.0,459.2 1460.8,464.4 1466.8,458.0 1470.6,464.9 1475.2,464.4 1480.1,460.2 1484.3,464.8 1487.7,467.8 1491.5,459.8 1497.5,466.9 1501.2,460.7 1506.2,464.6 1510.9,462.0 1516.9,465.2 1520.6,458.2 1526.5,467.1 1531.3,460.5 1534.6,467.7 1540.0,464.8 1544.4,463.3 1549.8,457.4 1553.6,466.8 1559.1,461.5 1563.3,460.0 1569.2,459.3 1573.5,460.7 1577.2,464.7 1582.4,459.8 1587.1,459.7 1591.4,465.8 1595.5,460.3 1601.6,465.2 1607.3,461.0 1611.0,463.5 1616.4,467.2 1621.3,460.0 1627.4,460.2 1631.0,461.7 1635.8,464.8 1640.6,460.1 1644.4,464.6 1647.9,460.7 1653.4,463.6" fill="none" stroke="#a192f3" stroke-width="1.6" stroke-linejoin="miter" opacity="0.90"/><polyline points="426.5,466.9 431.5,461.4 435.3,460.7 440.4,466.4 444.1,460.0 449.5,460.6 453.4,467.5 458.8,464.6 463.9,464.5 467.8,462.9 473.0,460.0 477.1,465.6 480.6,464.5 486.4,463.3 491.5,459.1 495.9,465.2 500.5,459.9 505.2,465.0 509.7,460.7 513.4,464.8 518.3,462.4 523.4,460.7 526.9,464.7 531.8,460.1 537.3,464.5 541.0,462.4 546.1,467.9 550.9,461.6 555.7,459.4 559.8,462.2 563.7,466.9 567.2,461.3 572.1,466.4 575.3,460.3 578.7,468.0 582.2,460.6 587.0,466.1 591.1,460.5 595.2,458.1 599.7,466.8 603.7,459.7 609.3,461.8 614.3,461.8 619.0,465.4 622.9,460.3 626.2,464.8 631.4,461.5 636.6,466.2 641.3,460.5 645.6,467.5 649.0,461.6 653.0,461.4 656.5,466.0 662.0,460.7 666.6,458.7 670.6,463.2 674.1,465.4 679.6,459.8 683.8,467.3 687.5,463.8 693.2,458.3 697.5,466.7 702.9,461.1 706.5,458.7 711.1,467.9 715.0,461.3 718.2,461.0 723.3,465.5 728.7,466.7 734.1,462.0 739.3,460.4 745.1,465.4 750.4,461.5 753.6,465.7 759.3,458.5 764.7,468.0 769.9,460.6 774.3,463.2 778.0,466.2 781.7,461.4 787.0,464.9 791.8,458.4 796.3,467.4 800.0,463.7 804.3,460.6 809.8,458.6 813.4,466.3 819.0,459.8 823.8,466.4 827.0,458.8 831.0,464.7 836.1,458.3 841.2,467.7 846.9,464.7 851.9,463.8 856.6,461.0 861.7,464.7 866.6,463.1 871.9,462.4 877.2,459.5 881.5,462.7 887.2,466.9 892.8,462.4 896.2,460.0 901.5,465.4 905.9,466.5 911.1,460.7 914.6,465.5 920.4,458.2 924.3,467.9 927.7,461.0 931.0,465.2 934.6,459.1 937.9,466.5 943.4,464.0 948.5,464.8 952.0,459.3 956.6,467.2 960.2,462.6 964.5,460.5 969.2,467.7 973.1,461.0 978.0,458.5 983.8,467.3 987.5,461.1 991.9,467.0 996.6,459.0 1000.4,465.8 1003.5,460.9 1006.9,464.6 1011.3,461.0 1014.4,465.4 1018.0,460.6 1022.1,464.2 1025.6,463.3 1030.4,464.5 1035.2,463.0 1039.8,463.6 1044.0,458.7 1048.1,465.5 1052.7,458.6 1057.5,467.2 1061.8,458.9 1066.9,465.0 1071.6,465.2 1075.4,459.8 1080.9,465.7 1086.1,458.5 1089.7,462.7 1094.4,465.9 1099.7,463.3 1104.0,459.1 1108.3,463.6 1112.6,461.2 1118.3,467.9 1123.0,458.2 1127.6,464.7 1132.9,461.7 1136.3,458.2 1141.8,464.6 1147.2,458.9 1151.7,461.2 1157.0,460.6 1161.7,466.9 1167.4,463.0 1172.2,459.9 1175.7,460.8 1180.2,466.5 1183.5,459.3 1188.6,463.9 1194.5,466.7 1199.3,461.0 1203.1,467.3 1208.2,461.2 1213.3,465.1 1218.1,460.4 1222.5,461.0 1226.8,466.8 1232.2,459.0 1236.6,465.5 1241.2,463.5 1244.4,463.4 1248.6,460.0 1253.7,465.0 1259.2,461.3 1264.7,465.8 1269.6,465.0 1273.2,458.4 1277.6,462.8 1282.7,462.2 1287.8,467.6 1293.0,464.9 1297.8,461.3 1302.5,459.5 1307.5,467.3 1311.8,460.8 1316.5,464.7 1320.5,462.9 1325.5,461.3 1330.3,464.9 1335.1,460.6 1340.8,460.9 1344.8,464.2 1350.0,467.7 1353.5,460.8 1357.1,464.3 1362.0,458.5 1366.6,464.8 1372.4,460.7 1376.5,464.7 1381.9,460.6 1387.1,467.8 1392.8,458.9 1396.6,467.6 1401.0,459.5 1404.3,466.8 1409.8,458.4 1413.2,465.7 1416.8,459.2 1421.0,466.3 1424.5,465.3 1428.9,460.1 1433.1,465.1 1437.0,462.9 1440.4,458.6 1444.5,463.6 1449.3,466.5 1453.6,458.2 1457.0,467.7 1462.7,464.8 1466.1,461.1 1471.5,459.8 1476.1,466.5 1481.6,460.0 1485.7,465.5 1491.1,462.4 1495.1,458.5 1498.9,465.6 1502.3,460.7 1507.2,461.8 1511.1,464.6 1514.5,459.9 1518.6,464.6 1522.5,460.7 1525.8,460.6 1530.1,465.2 1535.3,465.3 1539.3,460.0 1542.7,466.6 1546.9,462.7 1550.9,463.4 1554.7,462.9 1559.5,458.5 1564.6,465.8 1569.9,463.5 1575.4,460.0 1579.4,465.0 1585.0,461.2 1588.7,467.3 1594.2,462.0 1598.5,462.4 1603.4,459.8 1607.9,465.3 1613.1,467.6 1618.7,460.0 1623.3,465.3 1628.6,459.6 1631.8,467.9 1635.0,458.3 1640.6,465.5 1644.6,463.4 1648.9,461.0 1653.1,465.1 1657.6,464.9" fill="none" stroke="#3f98ea" stroke-width="1.7" stroke-linejoin="miter" opacity="0.90"/><polyline points="426.5,463.5 433.0,465.6 438.9,463.8 445.6,466.4 451.6,465.0 457.0,462.8 462.7,465.4 467.7,466.3 473.0,463.8 477.9,467.2 482.0,466.0 484.0,474.2 504.0,470.5 516.0,466.0 522.0,466.7 528.3,462.9 533.9,465.0 538.9,467.0 544.6,463.5 551.4,463.3 558.4,464.8 564.5,464.3 570.5,463.6 575.0,466.0 577.0,474.2 597.0,470.5 609.0,466.0 615.0,466.6 620.4,466.2 625.7,467.1 632.6,466.1 639.2,465.4 645.8,463.3 651.7,466.4 657.0,466.9 663.9,464.6 668.0,466.0 670.0,474.2 690.0,470.5 702.0,466.0 708.0,464.8 713.7,467.2 719.5,462.9 724.5,466.0 731.7,465.0 737.6,465.2 744.2,463.8 750.5,465.2 756.8,463.6 760.0,466.0 762.0,474.2 782.0,470.5 794.0,466.0 800.0,464.3 807.0,464.3 813.3,464.1 818.3,463.1 825.1,466.2 830.8,465.8 837.2,466.8 844.3,464.6 851.0,466.0 853.0,474.2 873.0,470.5 885.0,466.0 891.0,467.0 897.2,466.7 903.2,464.5 908.6,466.7 913.8,463.1 914.0,466.0 916.0,474.2 936.0,470.5 948.0,466.0 954.0,466.2 960.0,466.5 964.9,463.9 970.4,464.6 975.6,463.1 981.2,466.8 988.0,466.0 990.0,474.2 1010.0,470.5 1022.0,466.0 1028.0,466.1 1033.9,463.9 1041.1,465.1 1047.6,462.9 1052.9,466.5 1059.6,466.7 1065.9,464.7 1072.1,466.5 1077.6,465.2 1078.0,466.0 1080.0,474.2 1100.0,470.5 1112.0,466.0 1118.0,466.2 1122.8,465.8 1129.9,462.9 1136.1,465.6 1142.0,466.0 1144.0,474.2 1164.0,470.5 1176.0,466.0 1182.0,465.4 1187.4,464.6 1194.5,466.8 1199.6,463.2 1204.7,462.9 1208.0,466.0 1210.0,474.2 1230.0,470.5 1242.0,466.0 1248.0,463.4 1254.9,465.7 1260.0,465.2 1265.6,465.0 1270.0,466.0 1272.0,474.2 1292.0,470.5 1304.0,466.0 1310.0,463.5 1315.2,464.5 1321.7,465.2 1326.7,465.9 1333.6,466.2 1338.0,466.0 1340.0,474.2 1360.0,470.5 1372.0,466.0 1378.0,462.8 1383.9,463.1 1390.5,463.6 1397.1,463.9 1402.0,466.0 1404.0,474.2 1424.0,470.5 1436.0,466.0 1442.0,464.2 1446.9,464.5 1452.4,466.8 1458.0,465.0 1464.1,467.0 1468.0,466.0 1470.0,474.2 1490.0,470.5 1502.0,466.0 1508.0,465.4 1514.0,466.0 1521.1,464.2 1527.6,465.1 1532.0,466.0 1534.0,474.2 1554.0,470.5 1566.0,466.0 1572.0,463.1 1578.8,467.1 1584.4,464.2 1591.6,463.3 1596.6,463.1 1603.3,466.1 1606.0,466.0 1608.0,474.2 1628.0,470.5 1640.0,466.0 1646.0,465.5 1650.8,465.6 1656.7,465.1" fill="none" stroke="#e7b53a" stroke-width="2" stroke-linejoin="round"/><polyline points="426.5,467.8 432.2,461.6 436.6,458.4 441.2,466.5 447.3,460.3 453.7,465.9 459.9,460.6 465.2,465.5 470.9,459.8 474.8,468.9 479.7,462.6 485.2,464.1 489.2,458.5 493.4,468.5 498.7,459.3 503.0,463.0 507.0,460.5 511.5,467.9 515.5,460.8 520.6,467.0 525.7,459.4 531.2,466.8 535.5,465.6 539.4,458.2 544.8,467.8 551.4,459.7 556.8,461.6 561.4,467.4 566.5,459.6 570.2,468.9 575.7,457.3 580.5,464.9 584.6,460.2 590.9,465.8 596.5,461.7 602.5,458.8 608.0,464.5 613.2,462.2 618.0,463.3 624.1,468.6 629.6,457.3 634.7,465.9 638.7,458.3 642.8,466.7 648.1,457.9 652.6,466.6 656.6,460.6 662.5,467.6 666.8,458.4 671.6,463.9 677.0,466.5 681.4,457.3 687.8,467.7 694.3,460.8 700.7,468.9 707.0,465.6 710.9,461.8 714.9,458.7 718.6,468.1 723.8,460.0 730.5,467.7 736.1,457.0 740.5,465.6 746.9,462.4 752.0,468.7 755.7,457.2 761.9,468.9 767.1,462.7 773.6,459.4 779.0,462.5 784.8,462.5 789.0,468.4 794.2,459.0 798.2,465.8 802.6,461.5 806.5,463.3 810.3,458.3 815.9,462.5 820.3,467.4 826.1,459.6 831.9,467.3 837.0,462.1 842.2,461.9 846.4,460.6 852.7,468.6 858.0,459.0 863.8,467.5 868.6,461.0 874.7,459.1 878.6,467.3 885.0,459.5 890.2,466.3 894.9,463.3 899.6,466.0 904.6,459.9 911.1,465.6 917.2,457.6 921.5,467.3 925.5,462.6 931.6,460.5 937.8,461.5 943.2,458.9 949.2,467.0 953.3,463.8 959.5,458.1 963.4,465.8 969.9,459.2 975.0,465.1 980.7,462.2 987.2,460.1 992.2,464.7 997.8,466.7 1001.5,459.6 1005.9,466.9 1012.0,465.5 1017.0,457.2 1021.9,468.3 1027.3,464.2 1033.9,457.2 1039.2,466.1 1043.6,460.5 1050.3,465.8 1055.9,460.3 1060.3,464.8 1066.3,459.9 1072.7,465.7 1079.4,457.8 1085.5,468.4 1090.5,457.2 1095.6,465.0 1102.0,458.2 1107.6,465.6 1114.2,468.6 1118.7,458.5 1122.5,461.9 1127.4,466.2 1132.8,460.1 1137.5,457.2 1142.5,468.7 1147.3,459.5 1151.7,466.0 1156.9,458.0 1162.9,468.8 1169.5,464.3 1174.5,457.6 1179.6,466.4 1184.4,458.1 1189.0,467.8 1195.2,464.0 1199.6,460.3 1204.5,465.1 1210.0,461.1 1213.8,457.3 1217.5,466.9 1221.8,460.6 1225.7,460.1 1230.0,457.5 1234.7,468.2 1240.3,460.1 1245.6,457.6 1249.4,466.6 1254.9,458.5 1258.9,465.0 1264.8,464.6 1269.4,457.2 1275.6,462.5 1282.0,468.1 1287.3,463.0 1291.7,461.0 1297.5,465.6 1303.6,459.9 1310.1,462.6 1315.5,466.3 1322.2,457.0 1325.9,465.1 1329.8,465.9 1335.8,459.6 1340.6,466.5 1344.7,463.2 1349.5,461.8 1355.8,458.6 1361.3,468.6 1368.1,457.2 1372.5,465.3 1378.1,468.5 1382.9,457.2 1386.8,465.8 1393.2,460.8 1398.4,468.0 1402.9,460.0 1408.2,467.2 1414.4,460.1 1419.6,466.8 1425.6,458.5 1432.1,466.1 1437.9,460.1 1443.4,465.5 1447.7,457.6 1452.0,467.0 1456.5,457.7 1460.4,466.8 1464.4,460.5 1469.3,467.2 1475.5,465.6 1479.9,462.1 1485.7,458.1 1490.6,462.8 1496.8,467.9 1501.1,459.6 1506.8,466.0 1513.3,459.2 1517.4,465.7 1524.0,458.2 1529.4,465.1 1533.4,460.9 1537.4,467.7 1542.9,460.3 1548.0,468.8 1553.4,459.3 1557.4,465.7 1563.4,459.2 1568.1,466.4 1573.2,464.7 1578.2,460.2 1583.0,468.9 1586.8,459.5 1592.2,464.9 1597.6,457.7 1603.3,469.0 1608.5,461.3 1612.4,459.0 1618.1,467.8 1622.6,464.8 1628.7,461.0 1632.4,464.9 1636.5,457.0 1641.6,465.4 1646.1,457.9 1652.7,460.5 1658.2,462.4" fill="none" stroke="#4536b6" stroke-width="2.0" stroke-linejoin="miter" opacity="1.00"/></svg>
<div class="t" style="left:416.00px;top:469.59px;font-size:11.00px;color:#4a4a52;">0</div>
<div class="t" style="left:410.10px;top:441.59px;font-size:11.00px;letter-spacing:-0.210px;color:#4a4a52;">20</div>
<div class="t" style="left:410.10px;top:413.59px;font-size:11.00px;letter-spacing:-0.210px;color:#4a4a52;">40</div>
<div class="t" style="left:410.10px;top:385.59px;font-size:11.00px;letter-spacing:-0.210px;color:#4a4a52;">60</div>
<div class="t" style="left:410.10px;top:357.59px;font-size:11.00px;letter-spacing:-0.210px;color:#4a4a52;">80</div>
<div class="t" style="left:404.50px;top:329.59px;font-size:11.00px;letter-spacing:-0.385px;color:#4a4a52;">100</div>
<div class="t" style="left:404.50px;top:301.59px;font-size:11.00px;letter-spacing:-0.385px;color:#4a4a52;">120</div>
<div class="t" style="left:425.50px;top:481.89px;font-size:11.00px;letter-spacing:-0.389px;color:#4a4a52;">13:15</div>
<div class="t" style="left:580.00px;top:481.89px;font-size:11.00px;letter-spacing:-0.389px;color:#4a4a52;">13:30</div>
<div class="t" style="left:734.50px;top:481.89px;font-size:11.00px;letter-spacing:-0.389px;color:#4a4a52;">13:45</div>
<div class="t" style="left:889.00px;top:481.89px;font-size:11.00px;letter-spacing:-0.389px;color:#4a4a52;">14:00</div>
<div class="t" style="left:1043.50px;top:481.89px;font-size:11.00px;letter-spacing:-0.389px;color:#4a4a52;">14:15</div>
<div class="t" style="left:1198.00px;top:481.89px;font-size:11.00px;letter-spacing:-0.389px;color:#4a4a52;">14:30</div>
<div class="t" style="left:1352.50px;top:481.89px;font-size:11.00px;letter-spacing:-0.389px;color:#4a4a52;">14:45</div>
<div class="t" style="left:1507.00px;top:481.89px;font-size:11.00px;letter-spacing:-0.389px;color:#4a4a52;">15:00</div>
<div class="t" style="left:361.1px;top:389.6px;font-size:11.5px;color:#8b8b93;transform:rotate(-90deg);transform-origin:center;letter-spacing:0.3px;width:50px;text-align:center;">Percent</div>
<div class="r" style="left:415.00px;top:512.70px;width:11.60px;height:11.60px;background:#3a96e8;border-radius:2px;"></div>
<div class="t" style="left:433.80px;top:511.30px;font-size:13.00px;letter-spacing:-0.160px;color:#36363d;">interface:ethernet0,snmp_device:10.0.2.5,snmp_host:paris-edgrt-001</div>
<div class="r" style="left:841.10px;top:512.40px;width:10.90px;height:11.20px;background:#5546c6;border-radius:2px;"></div>
<div class="t" style="left:859.60px;top:511.30px;font-size:13.00px;letter-spacing:-0.066px;color:#36363d;">interface:mgmt,snmp_device:127.0.0.1,snmp_host:f5-big-ip-adc-good-byol-1-vm.c.datadog-integrations-lab.internal</div>
<div class="r" style="left:1608.00px;top:506.50px;width:28.00px;height:20.50px;background:#fff;border:1px solid #e3e3e7;border-radius:3px;"></div>
<div class="t" style="left:1614.59px;top:510.50px;font-size:13.00px;color:#3b3b42;">+8</div>
<div class="t" style="left:357.90px;top:578.73px;font-size:14.50px;letter-spacing:0.220px;color:#2b2b31;">Showing </div>
<div class="t" style="left:419.50px;top:578.73px;font-size:14.50px;letter-spacing:-0.254px;font-weight:bold;color:#141418;">1–50</div>
<div class="t" style="left:455.50px;top:578.73px;font-size:14.50px;letter-spacing:1.092px;color:#2b2b31;">of</div>
<div class="t" style="left:473.20px;top:578.73px;font-size:14.50px;letter-spacing:-0.807px;font-weight:bold;color:#141418;">145</div>
<div class="t" style="left:500.20px;top:578.73px;font-size:14.50px;letter-spacing:0.283px;color:#2b2b31;">results</div>
<div class="r" style="left:1568.50px;top:569.70px;width:115.70px;height:30.30px;background:#fff;border:1px solid #dfdfe3;border-radius:4px;"></div>
<svg width="20" height="20" style="left:1577.6px;top:575.8px" viewBox="1577.6 575.8 20 20"><path d="M1586.98,579.53 L1588.22,579.53 L1588.95,581.34 L1589.80,581.69 L1591.60,580.93 L1592.47,581.80 L1591.71,583.60 L1592.06,584.45 L1593.87,585.18 L1593.87,586.42 L1592.06,587.15 L1591.71,588.00 L1592.47,589.80 L1591.60,590.67 L1589.80,589.91 L1588.95,590.26 L1588.22,592.07 L1586.98,592.07 L1586.25,590.26 L1585.40,589.91 L1583.60,590.67 L1582.73,589.80 L1583.49,588.00 L1583.14,587.15 L1581.33,586.42 L1581.33,585.18 L1583.14,584.45 L1583.49,583.60 L1582.73,581.80 L1583.60,580.93 L1585.40,581.69 L1586.25,581.34 Z" fill="#4d4d55"/><circle cx="1587.60" cy="585.80" r="2.08" fill="#fff"/></svg>
<div class="t" style="left:1602.90px;top:578.33px;font-size:14.50px;letter-spacing:0.098px;color:#2b2b31;">Customize</div>
<div class="r" style="left:357.90px;top:609.60px;width:1326.50px;height:350.40px;background:#fff;border:1px solid #e2e2e6;border-radius:4px 4px 0 0;"></div>
<div class="r" style="left:1509.00px;top:609.60px;width:1.00px;height:350.40px;background:#e6e6ea;"></div>
<div class="r" style="left:357.90px;top:641.10px;width:1326.50px;height:1.00px;background:#e6e6ea;"></div>
<div class="r" style="left:357.90px;top:671.80px;width:1326.50px;height:1.00px;background:#e6e6ea;"></div>
<div class="r" style="left:357.90px;top:711.50px;width:1326.50px;height:1.00px;background:#e6e6ea;"></div>
<div class="r" style="left:357.90px;top:751.20px;width:1326.50px;height:1.00px;background:#e6e6ea;"></div>
<div class="r" style="left:357.90px;top:790.90px;width:1326.50px;height:1.00px;background:#e6e6ea;"></div>
<div class="r" style="left:357.90px;top:830.60px;width:1326.50px;height:1.00px;background:#e6e6ea;"></div>
<div class="r" style="left:357.90px;top:870.30px;width:1326.50px;height:1.00px;background:#e6e6ea;"></div>
<div class="r" style="left:357.90px;top:910.00px;width:1326.50px;height:1.00px;background:#e6e6ea;"></div>
<div class="t" style="left:1548.50px;top:619.00px;font-size:13.00px;letter-spacing:0.476px;color:#66666e;">THROUGHPUT</div>
<svg width="12" height="14" style="left:366px;top:648px" viewBox="366 648 12 14"><path d="M372.7 649.5 L372.7 660.5 M368.8 656.6 L372.7 660.6 L376.6 656.6" fill="none" stroke="#1e1e24" stroke-width="1.6"/></svg>
<div class="t" style="left:386.80px;top:649.77px;font-size:13.50px;font-weight:bold;color:#16161b;transform:scaleX(0.8756);transform-origin:0 0;">STATE</div>
<div class="t" style="left:483.90px;top:649.77px;font-size:13.50px;font-weight:bold;color:#16161b;transform:scaleX(0.9471);transform-origin:0 0;">DEVICE NAME</div>
<div class="t" style="left:851.70px;top:649.77px;font-size:13.50px;font-weight:bold;color:#16161b;transform:scaleX(0.9224);transform-origin:0 0;">IP ADDRESS</div>
<div class="t" style="left:943.60px;top:649.77px;font-size:13.50px;font-weight:bold;color:#16161b;transform:scaleX(0.9720);transform-origin:0 0;">UPTIME</div>
<div class="t" style="left:1009.80px;top:649.77px;font-size:13.50px;font-weight:bold;color:#16161b;transform:scaleX(0.9249);transform-origin:0 0;">INTERFACE STATUS</div>
<div class="t" style="left:1149.20px;top:649.77px;font-size:13.50px;font-weight:bold;color:#16161b;transform:scaleX(0.9300);transform-origin:0 0;">TAGS</div>
<div class="t" style="left:1517.00px;top:649.77px;font-size:13.50px;font-weight:bold;color:#16161b;transform:scaleX(1.0337);transform-origin:0 0;">INBOUND</div>
<div class="t" style="left:1599.10px;top:649.77px;font-size:13.50px;font-weight:bold;color:#16161b;transform:scaleX(0.9800);transform-origin:0 0;">OUTBOUND</div>
<div class="r" style="left:366.50px;top:680.10px;width:100.70px;height:21.20px;background:#e8304f;border-radius:2px;"></div>
<div class="t" style="left:372.40px;top:684.37px;font-size:13.50px;font-weight:bold;color:#fff;transform:scaleX(0.8530);transform-origin:0 0;">UNREACHABLE</div>
<div class="t" style="left:483.70px;top:682.63px;font-size:14.50px;letter-spacing:0.203px;color:#2b2b31;">paris-rt-004</div>
<div class="t" style="left:851.70px;top:682.63px;font-size:14.50px;letter-spacing:-0.402px;color:#2b2b31;">10.0.1.8</div>
<div class="r" style="left:943.60px;top:689.90px;width:12.80px;height:1.20px;background:#2b2b31;"></div>
<div class="r" style="left:1009.80px;top:689.90px;width:13.40px;height:1.20px;background:#2b2b31;"></div>
<div class="r" style="left:1148.50px;top:680.10px;width:186.70px;height:22.40px;background:#f2f2f4;border-radius:4px;"></div>
<div class="t" style="left:1153.00px;top:683.63px;font-size:14.50px;letter-spacing:0.210px;color:#4d5670;">device_namespace:</div>
<div class="t" style="left:1285.54px;top:683.63px;font-size:14.50px;letter-spacing:0.210px;color:#263a70;">default</div>
<div class="r" style="left:1340.80px;top:680.10px;width:127.20px;height:22.40px;background:#f2f2f4;border-radius:4px;"></div>
<div class="t" style="left:1345.00px;top:683.63px;font-size:14.50px;letter-spacing:-0.022px;color:#4d5670;">device_type:acc...</div>
<div class="r" style="left:1473.80px;top:680.00px;width:27.30px;height:23.60px;background:#fff;border:1px solid #e2e2e6;border-radius:3px;"></div>
<div class="t" style="left:1479.52px;top:684.25px;font-size:14.00px;color:#2b2b31;">+4</div>
<div class="r" style="left:1569.40px;top:689.70px;width:12.70px;height:1.20px;background:#2b2b31;"></div>
<div class="r" style="left:1662.40px;top:689.70px;width:13.10px;height:1.20px;background:#2b2b31;"></div>
<div class="r" style="left:366.50px;top:719.80px;width:100.70px;height:21.20px;background:#3fc462;border-radius:2px;"></div>
<div class="t" style="left:408.10px;top:724.37px;font-size:13.50px;font-weight:bold;color:#fff;transform:scaleX(0.8593);transform-origin:0 0;">OK</div>
<div class="t" style="left:483.70px;top:722.33px;font-size:14.50px;letter-spacing:0.083px;color:#2b2b31;">nyc-rt-002</div>
<div class="t" style="left:851.70px;top:722.33px;font-size:14.50px;letter-spacing:-0.271px;color:#2b2b31;">127.0.0.2</div>
<div class="t" style="left:943.60px;top:722.33px;font-size:14.50px;letter-spacing:-0.107px;color:#2b2b31;">21d</div>
<div class="r" style="left:1009.60px;top:720.00px;width:4.80px;height:21.00px;background:#3cc15c;border-radius:1.8px;"></div>
<div class="t" style="left:1019.00px;top:724.75px;font-size:14.00px;color:#2b2b31;">49</div>
<div class="r" style="left:1039.17px;top:720.00px;width:4.80px;height:21.00px;background:#f9b21d;border-radius:1.8px;"></div>
<div class="t" style="left:1048.57px;top:724.75px;font-size:14.00px;color:#2b2b31;">1</div>
<div class="r" style="left:1060.96px;top:720.00px;width:4.80px;height:21.00px;background:#ec2a4a;border-radius:1.8px;"></div>
<div class="t" style="left:1070.36px;top:724.75px;font-size:14.00px;color:#2b2b31;">0</div>
<div class="r" style="left:1082.75px;top:720.00px;width:4.80px;height:21.00px;background:#909096;border-radius:1.8px;"></div>
<div class="t" style="left:1092.15px;top:724.75px;font-size:14.00px;color:#2b2b31;">0</div>
<div class="r" style="left:1148.50px;top:719.80px;width:240.50px;height:22.40px;background:#f2f2f4;border-radius:4px;"></div>
<div class="t" style="left:1153.00px;top:723.33px;font-size:14.50px;letter-spacing:0.197px;color:#4d5670;">autodiscovery_subnet:</div>
<div class="t" style="left:1302.24px;top:723.33px;font-size:14.50px;letter-spacing:0.197px;color:#263a70;">127.0.0.0/24</div>
<div class="r" style="left:1394.60px;top:719.80px;width:73.40px;height:22.40px;background:#f2f2f4;border-radius:4px;"></div>
<div class="t" style="left:1398.80px;top:723.33px;font-size:14.50px;letter-spacing:-0.284px;color:#4d5670;">device_...</div>
<div class="r" style="left:1473.80px;top:719.70px;width:27.30px;height:23.60px;background:#fff;border:1px solid #e2e2e6;border-radius:3px;"></div>
<div class="t" style="left:1479.52px;top:723.95px;font-size:14.00px;color:#2b2b31;">+5</div>
<div class="t" style="left:1533.05px;top:722.03px;font-size:14.50px;color:#2b2b31;">775 B/s</div>
<div class="t" style="left:1626.64px;top:722.03px;font-size:14.50px;color:#2b2b31;">481 B/s</div>
<div class="r" style="left:366.50px;top:759.50px;width:100.70px;height:21.20px;background:#3fc462;border-radius:2px;"></div>
<div class="t" style="left:408.10px;top:764.07px;font-size:13.50px;font-weight:bold;color:#fff;transform:scaleX(0.8593);transform-origin:0 0;">OK</div>
<div class="t" style="left:483.70px;top:762.03px;font-size:14.50px;letter-spacing:0.049px;color:#2b2b31;">paris-fw-001-10.0.1.5</div>
<div class="t" style="left:851.70px;top:762.03px;font-size:14.50px;letter-spacing:-0.383px;color:#2b2b31;">127.0.0.5</div>
<div class="t" style="left:943.60px;top:762.03px;font-size:14.50px;letter-spacing:0.036px;color:#2b2b31;">11d</div>
<div class="r" style="left:1009.60px;top:759.70px;width:4.80px;height:21.00px;background:#3cc15c;border-radius:1.8px;"></div>
<div class="t" style="left:1019.00px;top:764.45px;font-size:14.00px;color:#2b2b31;">3</div>
<div class="r" style="left:1031.39px;top:759.70px;width:4.80px;height:21.00px;background:#f9b21d;border-radius:1.8px;"></div>
<div class="t" style="left:1040.79px;top:764.45px;font-size:14.00px;color:#2b2b31;">2</div>
<div class="r" style="left:1053.17px;top:759.70px;width:4.80px;height:21.00px;background:#ec2a4a;border-radius:1.8px;"></div>
<div class="t" style="left:1062.57px;top:764.45px;font-size:14.00px;color:#2b2b31;">0</div>
<div class="r" style="left:1074.96px;top:759.70px;width:4.80px;height:21.00px;background:#909096;border-radius:1.8px;"></div>
<div class="t" style="left:1084.36px;top:764.45px;font-size:14.00px;color:#2b2b31;">0</div>
<div class="r" style="left:1148.50px;top:759.50px;width:240.50px;height:22.40px;background:#f2f2f4;border-radius:4px;"></div>
<div class="t" style="left:1153.00px;top:763.03px;font-size:14.50px;letter-spacing:0.197px;color:#4d5670;">autodiscovery_subnet:</div>
<div class="t" style="left:1302.24px;top:763.03px;font-size:14.50px;letter-spacing:0.197px;color:#263a70;">127.0.0.0/24</div>
<div class="r" style="left:1394.60px;top:759.50px;width:73.40px;height:22.40px;background:#f2f2f4;border-radius:4px;"></div>
<div class="t" style="left:1398.80px;top:763.03px;font-size:14.50px;letter-spacing:-0.284px;color:#4d5670;">device_...</div>
<div class="r" style="left:1473.80px;top:759.40px;width:27.30px;height:23.60px;background:#fff;border:1px solid #e2e2e6;border-radius:3px;"></div>
<div class="t" style="left:1479.52px;top:763.65px;font-size:14.00px;color:#2b2b31;">+4</div>
<div class="t" style="left:1519.34px;top:761.73px;font-size:14.50px;color:#2b2b31;">3.38 KB/s</div>
<div class="t" style="left:1626.64px;top:761.73px;font-size:14.50px;color:#2b2b31;">299 B/s</div>
<div class="r" style="left:366.50px;top:799.20px;width:100.70px;height:21.20px;background:#3fc462;border-radius:2px;"></div>
<div class="t" style="left:408.10px;top:803.77px;font-size:13.50px;font-weight:bold;color:#fff;transform:scaleX(0.8593);transform-origin:0 0;">OK</div>
<div class="t" style="left:483.70px;top:801.73px;font-size:14.50px;letter-spacing:0.332px;color:#2b2b31;">Nexus-eu1.datadog.managed</div>
<div class="t" style="left:851.70px;top:801.73px;font-size:14.50px;letter-spacing:-0.271px;color:#2b2b31;">127.0.0.2</div>
<div class="t" style="left:943.60px;top:801.73px;font-size:14.50px;letter-spacing:0.199px;color:#2b2b31;">7mo</div>
<div class="r" style="left:1009.60px;top:799.40px;width:4.80px;height:21.00px;background:#3cc15c;border-radius:1.8px;"></div>
<div class="t" style="left:1019.00px;top:804.15px;font-size:14.00px;color:#2b2b31;">1</div>
<div class="r" style="left:1031.39px;top:799.40px;width:4.80px;height:21.00px;background:#f9b21d;border-radius:1.8px;"></div>
<div class="t" style="left:1040.79px;top:804.15px;font-size:14.00px;color:#2b2b31;">6</div>
<div class="r" style="left:1053.17px;top:799.40px;width:4.80px;height:21.00px;background:#ec2a4a;border-radius:1.8px;"></div>
<div class="t" style="left:1062.57px;top:804.15px;font-size:14.00px;color:#2b2b31;">0</div>
<div class="r" style="left:1074.96px;top:799.40px;width:4.80px;height:21.00px;background:#909096;border-radius:1.8px;"></div>
<div class="t" style="left:1084.36px;top:804.15px;font-size:14.00px;color:#2b2b31;">1</div>
<div class="r" style="left:1148.50px;top:799.20px;width:240.50px;height:22.40px;background:#f2f2f4;border-radius:4px;"></div>
<div class="t" style="left:1153.00px;top:802.73px;font-size:14.50px;letter-spacing:0.197px;color:#4d5670;">autodiscovery_subnet:</div>
<div class="t" style="left:1302.24px;top:802.73px;font-size:14.50px;letter-spacing:0.197px;color:#263a70;">127.0.0.0/24</div>
<div class="r" style="left:1394.60px;top:799.20px;width:73.40px;height:22.40px;background:#f2f2f4;border-radius:4px;"></div>
<div class="t" style="left:1398.80px;top:802.73px;font-size:14.50px;letter-spacing:-0.284px;color:#4d5670;">device_...</div>
<div class="r" style="left:1473.80px;top:799.10px;width:27.30px;height:23.60px;background:#fff;border:1px solid #e2e2e6;border-radius:3px;"></div>
<div class="t" style="left:1479.52px;top:803.35px;font-size:14.00px;color:#2b2b31;">+5</div>
<div class="t" style="left:1533.05px;top:801.43px;font-size:14.50px;color:#2b2b31;">829 B/s</div>
<div class="t" style="left:1626.64px;top:801.43px;font-size:14.50px;color:#2b2b31;">715 B/s</div>
<div class="r" style="left:366.50px;top:838.90px;width:100.70px;height:21.20px;background:#3fc462;border-radius:2px;"></div>
<div class="t" style="left:408.10px;top:843.47px;font-size:13.50px;font-weight:bold;color:#fff;transform:scaleX(0.8593);transform-origin:0 0;">OK</div>
<div class="t" style="left:483.70px;top:841.43px;font-size:14.50px;letter-spacing:-0.702px;color:#2b2b31;">ERX-1440_Edge</div>
<div class="t" style="left:851.70px;top:841.43px;font-size:14.50px;letter-spacing:-0.383px;color:#2b2b31;">127.0.0.7</div>
<div class="t" style="left:943.60px;top:841.43px;font-size:14.50px;letter-spacing:-0.795px;color:#2b2b31;">8d</div>
<div class="r" style="left:1009.60px;top:839.10px;width:4.80px;height:21.00px;background:#3cc15c;border-radius:1.8px;"></div>
<div class="t" style="left:1019.00px;top:843.85px;font-size:14.00px;color:#2b2b31;">1</div>
<div class="r" style="left:1031.39px;top:839.10px;width:4.80px;height:21.00px;background:#f9b21d;border-radius:1.8px;"></div>
<div class="t" style="left:1040.79px;top:843.85px;font-size:14.00px;color:#2b2b31;">74</div>
<div class="r" style="left:1060.96px;top:839.10px;width:4.80px;height:21.00px;background:#ec2a4a;border-radius:1.8px;"></div>
<div class="t" style="left:1070.36px;top:843.85px;font-size:14.00px;color:#2b2b31;">0</div>
<div class="r" style="left:1082.75px;top:839.10px;width:4.80px;height:21.00px;background:#909096;border-radius:1.8px;"></div>
<div class="t" style="left:1092.15px;top:843.85px;font-size:14.00px;color:#2b2b31;">0</div>
<div class="r" style="left:1148.50px;top:838.90px;width:240.50px;height:22.40px;background:#f2f2f4;border-radius:4px;"></div>
<div class="t" style="left:1153.00px;top:842.43px;font-size:14.50px;letter-spacing:0.197px;color:#4d5670;">autodiscovery_subnet:</div>
<div class="t" style="left:1302.24px;top:842.43px;font-size:14.50px;letter-spacing:0.197px;color:#263a70;">127.0.0.0/24</div>
<div class="r" style="left:1394.60px;top:838.90px;width:73.40px;height:22.40px;background:#f2f2f4;border-radius:4px;"></div>
<div class="t" style="left:1398.80px;top:842.43px;font-size:14.50px;letter-spacing:-0.284px;color:#4d5670;">device_...</div>
<div class="r" style="left:1473.80px;top:838.80px;width:27.30px;height:23.60px;background:#fff;border:1px solid #e2e2e6;border-radius:3px;"></div>
<div class="t" style="left:1479.52px;top:843.05px;font-size:14.00px;color:#2b2b31;">+8</div>
<div class="t" style="left:1534.13px;top:841.13px;font-size:14.50px;color:#2b2b31;">112 B/s</div>
<div class="t" style="left:1634.69px;top:841.13px;font-size:14.50px;color:#2b2b31;">83 B/s</div>
<div class="r" style="left:366.50px;top:878.60px;width:100.70px;height:21.20px;background:#3fc462;border-radius:2px;"></div>
<div class="t" style="left:408.10px;top:883.17px;font-size:13.50px;font-weight:bold;color:#fff;transform:scaleX(0.8593);transform-origin:0 0;">OK</div>
<div class="t" style="left:483.70px;top:881.13px;font-size:14.50px;letter-spacing:-0.067px;color:#2b2b31;">ProCurve Switch 2810-24G</div>
<div class="t" style="left:851.70px;top:881.13px;font-size:14.50px;letter-spacing:-0.383px;color:#2b2b31;">127.0.0.5</div>
<div class="t" style="left:943.60px;top:881.13px;font-size:14.50px;letter-spacing:0.199px;color:#2b2b31;">4mo</div>
<div class="r" style="left:1009.60px;top:878.80px;width:4.80px;height:21.00px;background:#3cc15c;border-radius:1.8px;"></div>
<div class="t" style="left:1019.00px;top:883.55px;font-size:14.00px;color:#2b2b31;">5</div>
<div class="r" style="left:1031.39px;top:878.80px;width:4.80px;height:21.00px;background:#f9b21d;border-radius:1.8px;"></div>
<div class="t" style="left:1040.79px;top:883.55px;font-size:14.00px;color:#2b2b31;">0</div>
<div class="r" style="left:1053.17px;top:878.80px;width:4.80px;height:21.00px;background:#ec2a4a;border-radius:1.8px;"></div>
<div class="t" style="left:1062.57px;top:883.55px;font-size:14.00px;color:#2b2b31;">0</div>
<div class="r" style="left:1074.96px;top:878.80px;width:4.80px;height:21.00px;background:#909096;border-radius:1.8px;"></div>
<div class="t" style="left:1084.36px;top:883.55px;font-size:14.00px;color:#2b2b31;">5</div>
<div class="r" style="left:1148.50px;top:878.60px;width:240.50px;height:22.40px;background:#f2f2f4;border-radius:4px;"></div>
<div class="t" style="left:1153.00px;top:882.13px;font-size:14.50px;letter-spacing:0.197px;color:#4d5670;">autodiscovery_subnet:</div>
<div class="t" style="left:1302.24px;top:882.13px;font-size:14.50px;letter-spacing:0.197px;color:#263a70;">127.0.0.0/24</div>
<div class="r" style="left:1394.60px;top:878.60px;width:73.40px;height:22.40px;background:#f2f2f4;border-radius:4px;"></div>
<div class="t" style="left:1398.80px;top:882.13px;font-size:14.50px;letter-spacing:-0.169px;color:#4d5670;">snmp_d...</div>
<div class="r" style="left:1473.80px;top:878.50px;width:27.30px;height:23.60px;background:#fff;border:1px solid #e2e2e6;border-radius:3px;"></div>
<div class="t" style="left:1479.52px;top:882.75px;font-size:14.00px;color:#2b2b31;">+4</div>
<div class="t" style="left:1519.34px;top:880.83px;font-size:14.50px;color:#2b2b31;">3.55 KB/s</div>
<div class="t" style="left:1626.64px;top:880.83px;font-size:14.50px;color:#2b2b31;">583 B/s</div>
<div class="r" style="left:366.50px;top:918.30px;width:100.70px;height:21.20px;background:#3fc462;border-radius:2px;"></div>
<div class="t" style="left:408.10px;top:922.87px;font-size:13.50px;font-weight:bold;color:#fff;transform:scaleX(0.8593);transform-origin:0 0;">OK</div>
<div class="t" style="left:483.70px;top:920.83px;font-size:14.50px;letter-spacing:0.020px;color:#2b2b31;">paris-csw-134</div>
<div class="t" style="left:851.70px;top:920.83px;font-size:14.50px;letter-spacing:-0.383px;color:#2b2b31;">127.0.0.4</div>
<div class="t" style="left:943.60px;top:920.83px;font-size:14.50px;letter-spacing:-0.107px;color:#2b2b31;">12d</div>
<div class="r" style="left:1009.60px;top:918.50px;width:4.80px;height:21.00px;background:#3cc15c;border-radius:1.8px;"></div>
<div class="t" style="left:1019.00px;top:923.25px;font-size:14.00px;color:#2b2b31;">3</div>
<div class="r" style="left:1031.39px;top:918.50px;width:4.80px;height:21.00px;background:#f9b21d;border-radius:1.8px;"></div>
<div class="t" style="left:1040.79px;top:923.25px;font-size:14.00px;color:#2b2b31;">2</div>
<div class="r" style="left:1053.17px;top:918.50px;width:4.80px;height:21.00px;background:#ec2a4a;border-radius:1.8px;"></div>
<div class="t" style="left:1062.57px;top:923.25px;font-size:14.00px;color:#2b2b31;">0</div>
<div class="r" style="left:1074.96px;top:918.50px;width:4.80px;height:21.00px;background:#909096;border-radius:1.8px;"></div>
<div class="t" style="left:1084.36px;top:923.25px;font-size:14.00px;color:#2b2b31;">1</div>
<div class="r" style="left:1148.50px;top:918.30px;width:240.50px;height:22.40px;background:#f2f2f4;border-radius:4px;"></div>
<div class="t" style="left:1153.00px;top:921.83px;font-size:14.50px;letter-spacing:0.197px;color:#4d5670;">autodiscovery_subnet:</div>
<div class="t" style="left:1302.24px;top:921.83px;font-size:14.50px;letter-spacing:0.197px;color:#263a70;">127.0.0.0/24</div>
<div class="r" style="left:1394.60px;top:918.30px;width:73.40px;height:22.40px;background:#f2f2f4;border-radius:4px;"></div>
<div class="t" style="left:1398.80px;top:921.83px;font-size:14.50px;letter-spacing:-0.284px;color:#4d5670;">device_...</div>
<div class="r" style="left:1473.80px;top:918.20px;width:27.30px;height:23.60px;background:#fff;border:1px solid #e2e2e6;border-radius:3px;"></div>
<div class="t" style="left:1479.52px;top:922.45px;font-size:14.00px;color:#2b2b31;">+8</div>
<div class="t" style="left:1533.05px;top:920.53px;font-size:14.50px;color:#2b2b31;">270 B/s</div>
<div class="t" style="left:1626.64px;top:920.53px;font-size:14.50px;color:#2b2b31;">264 B/s</div>
</body></html>
